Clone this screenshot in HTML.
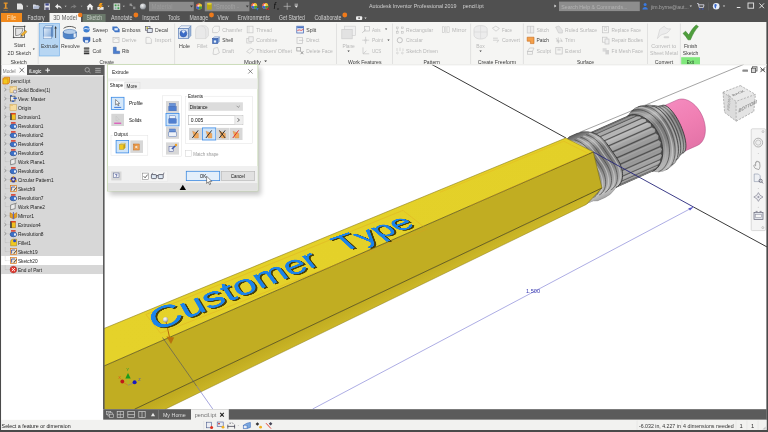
<!DOCTYPE html>
<html><head><meta charset="utf-8"><title>Autodesk Inventor Professional 2019 - pencil.ipt</title>
<style>
html,body{margin:0;padding:0;background:#4d4d4d;overflow:hidden;}
body{width:768px;height:432px;position:relative;font-family:'Liberation Sans', sans-serif;}
svg text{font-family:'Liberation Sans', sans-serif;}
#main{position:absolute;left:0;top:0;will-change:transform;filter:blur(0.35px);}
.ptxt{position:absolute;left:0;top:0;transform-origin:0 0;overflow:visible;pointer-events:none;}
</style></head><body>
<svg id="main" width="768" height="432" viewBox="0 0 768 432">
<defs>
<linearGradient id="gpink" gradientUnits="userSpaceOnUse" x1="672" y1="100" x2="697" y2="150"><stop offset="0" stop-color="#f48aBe"/><stop offset="0.45" stop-color="#f07fb3"/><stop offset="1" stop-color="#e272a6"/></linearGradient>
<linearGradient id="gring" gradientUnits="userSpaceOnUse" x1="588" y1="126" x2="619" y2="196"><stop offset="0" stop-color="#4a4a4a"/><stop offset="0.1" stop-color="#8a8a8a"/><stop offset="0.2" stop-color="#b2b2b2"/><stop offset="0.33" stop-color="#7c7c7c"/><stop offset="0.55" stop-color="#808080"/><stop offset="0.74" stop-color="#a2a2a2"/><stop offset="0.9" stop-color="#b8b8b8"/><stop offset="1" stop-color="#8a8a8a"/></linearGradient>
<linearGradient id="gflu" gradientUnits="userSpaceOnUse" x1="590" y1="130" x2="617" y2="190"><stop offset="0" stop-color="#666"/><stop offset="0.12" stop-color="#a8a8a8"/><stop offset="0.25" stop-color="#bcbcbc"/><stop offset="0.45" stop-color="#9c9c9c"/><stop offset="0.7" stop-color="#969696"/><stop offset="0.88" stop-color="#aaaaaa"/><stop offset="1" stop-color="#7a7a7a"/></linearGradient>
<linearGradient id="gtop" gradientUnits="userSpaceOnUse" x1="104" y1="340" x2="590" y2="140"><stop offset="0" stop-color="#e5d22a"/><stop offset="1" stop-color="#e3d028"/></linearGradient>
<linearGradient id="glow" gradientUnits="userSpaceOnUse" x1="360" y1="300" x2="368" y2="316"><stop offset="0" stop-color="#c0ab20"/><stop offset="1" stop-color="#d0bb2a"/></linearGradient>
<radialGradient id="gsph" cx="0.4" cy="0.35" r="0.7"><stop offset="0" stop-color="#ffffff"/><stop offset="0.6" stop-color="#c8c8c8"/><stop offset="1" stop-color="#808080"/></radialGradient><radialGradient id="gball" cx="0.4" cy="0.35" r="0.7"><stop offset="0" stop-color="#f0f0f0"/><stop offset="0.6" stop-color="#b4b8bc"/><stop offset="1" stop-color="#6e7278"/></radialGradient><linearGradient id="gblu" x1="0" y1="0" x2="1" y2="1"><stop offset="0" stop-color="#e6f0fa"/><stop offset="1" stop-color="#7da6d8"/></linearGradient><filter id="dsh" x="-15%" y="-15%" width="135%" height="135%"><feGaussianBlur stdDeviation="2.6"/></filter>
</defs>
<rect x="0.00" y="0.00" width="768.00" height="432.00" fill="#ffffff" />
<line x1="431.90" y1="64.50" x2="566.00" y2="138.00" stroke="#3a3a3a" stroke-width="1.0" />
<line x1="693.50" y1="207.00" x2="768.00" y2="247.50" stroke="#3a3a3a" stroke-width="1.0" />
<line x1="580.00" y1="132.20" x2="743.70" y2="64.40" stroke="#666" stroke-width="0.6" />
<path d="M662.55,106.44 L677.17,99.94 L679.22,99.27 L681.40,98.99 L683.69,99.12 L686.04,99.66 L688.40,100.58 L690.75,101.89 L693.04,103.55 L695.23,105.54 L697.29,107.83 L699.17,110.37 L700.85,113.12 L702.30,116.03 L703.49,119.06 L704.41,122.15 L705.03,125.25 L705.34,128.30 L705.35,131.26 L705.05,134.08 L704.45,136.69 L703.55,139.07 L702.37,141.17 L700.93,142.96 L699.26,144.39 L697.39,145.46 L682.77,151.96 L682.77,151.96 L683.69,151.31 L684.42,150.29 L684.96,148.91 L685.28,147.19 L685.39,145.16 L685.28,142.86 L684.95,140.32 L684.41,137.60 L683.67,134.73 L682.75,131.77 L681.65,128.76 L680.39,125.76 L679.01,122.82 L677.51,119.99 L675.94,117.31 L674.30,114.84 L672.64,112.62 L670.98,110.67 L669.35,109.05 L667.77,107.77 L666.28,106.86 L664.89,106.32 L663.64,106.18 L662.55,106.44Z" fill="url(#gpink)" stroke="#a8487e" stroke-width="0.5" />
<path d="M542.72,150.80 L566.28,139.79 L569.33,136.79 L576.64,133.54 L582.45,131.84 L587.92,131.82 L591.39,132.25 L627.95,116.01 L629.96,113.14 L632.09,110.55 L635.38,108.11 L639.04,106.48 L643.10,105.77 L646.41,105.84 L649.76,105.99 L654.35,106.47 L657.66,106.53 L662.10,105.43 L662.10,105.43 L663.25,105.17 L664.55,105.31 L666.00,105.87 L667.56,106.82 L669.20,108.16 L670.91,109.86 L672.64,111.88 L674.38,114.21 L676.08,116.79 L677.73,119.58 L679.29,122.54 L680.74,125.61 L682.05,128.74 L683.19,131.88 L684.16,134.98 L684.93,137.97 L685.49,140.82 L685.83,143.46 L685.95,145.87 L685.84,147.98 L685.50,149.78 L684.94,151.22 L684.18,152.29 L683.21,152.96 L683.21,152.96 L679.42,155.52 L677.25,158.02 L674.53,161.74 L672.40,164.33 L670.22,166.83 L666.97,169.37 L663.32,170.99 L659.29,171.79 L655.94,171.64 L652.47,171.21 L615.91,187.45 L613.90,190.32 L610.22,194.36 L605.06,197.52 L597.75,200.77 L593.49,201.03 L569.52,211.12Z" fill="url(#gring)" />
<path d="M578.59,137.93 L627.95,116.01 L630.50,115.16 L633.22,114.79 L636.07,114.92 L638.98,115.54 L641.91,116.64 L644.81,118.20 L647.64,120.19 L650.33,122.59 L652.86,125.34 L655.17,128.41 L657.22,131.74 L658.98,135.27 L660.42,138.95 L661.51,142.70 L662.24,146.47 L662.60,150.19 L662.57,153.80 L662.15,157.23 L661.36,160.43 L660.21,163.35 L658.72,165.92 L656.91,168.11 L654.82,169.89 L652.47,171.21 L603.12,193.14 L605.46,191.81 L607.56,190.04 L609.36,187.84 L610.86,185.27 L612.01,182.36 L612.80,179.16 L613.21,175.72 L613.24,172.11 L612.89,168.39 L612.16,164.62 L611.06,160.87 L609.62,157.20 L607.86,153.66 L605.81,150.34 L603.50,147.27 L600.98,144.51 L598.28,142.12 L595.46,140.12 L592.55,138.56 L589.62,137.46 L586.71,136.84 L583.87,136.71 L581.15,137.08 L578.59,137.93Z" fill="#4c4c4c" />
<polygon points="603.43,192.99 650.96,171.88 654.28,170.17 654.52,169.47 606.99,190.58" fill="url(#gflu)" stroke="#4a4a4a" stroke-width="0.3" stroke-linejoin="round"/>
<line x1="606.13" y1="191.32" x2="653.20" y2="170.41" stroke="#d0d0d0" stroke-width="0.5" opacity="0.45"/>
<polygon points="607.51,190.09 655.04,168.98 657.96,166.62 657.77,165.33 610.25,186.44" fill="url(#gflu)" stroke="#4a4a4a" stroke-width="0.3" stroke-linejoin="round"/>
<line x1="609.61" y1="187.48" x2="656.68" y2="166.57" stroke="#d0d0d0" stroke-width="0.5" opacity="0.45"/>
<polygon points="610.62,185.76 658.14,164.64 660.60,161.75 659.90,159.97 612.38,181.08" fill="url(#gflu)" stroke="#4a4a4a" stroke-width="0.3" stroke-linejoin="round"/>
<line x1="612.01" y1="182.37" x2="659.08" y2="161.46" stroke="#d0d0d0" stroke-width="0.5" opacity="0.45"/>
<polygon points="612.58,180.25 660.10,159.14 662.02,155.84 660.78,153.70 613.25,174.82" fill="url(#gflu)" stroke="#4a4a4a" stroke-width="0.3" stroke-linejoin="round"/>
<line x1="613.17" y1="176.27" x2="660.24" y2="155.36" stroke="#d0d0d0" stroke-width="0.5" opacity="0.45"/>
<polygon points="613.27,173.89 660.80,152.77 662.16,149.22 660.36,146.90 612.83,168.01" fill="url(#gflu)" stroke="#4a4a4a" stroke-width="0.3" stroke-linejoin="round"/>
<line x1="613.04" y1="169.56" x2="660.11" y2="148.65" stroke="#d0d0d0" stroke-width="0.5" opacity="0.45"/>
<polygon points="612.67,167.04 660.20,145.93 661.00,142.28 658.66,139.95 611.13,161.07" fill="url(#gflu)" stroke="#4a4a4a" stroke-width="0.3" stroke-linejoin="round"/>
<line x1="611.62" y1="162.61" x2="658.69" y2="141.70" stroke="#d0d0d0" stroke-width="0.5" opacity="0.45"/>
<polygon points="610.79,160.10 658.32,138.99 658.61,135.43 655.78,133.27 608.25,154.38" fill="url(#gflu)" stroke="#4a4a4a" stroke-width="0.3" stroke-linejoin="round"/>
<line x1="608.99" y1="155.83" x2="656.06" y2="134.92" stroke="#d0d0d0" stroke-width="0.5" opacity="0.45"/>
<polygon points="607.76,153.49 655.29,132.37 655.13,129.07 651.89,127.23 604.36,148.34" fill="url(#gflu)" stroke="#4a4a4a" stroke-width="0.3" stroke-linejoin="round"/>
<line x1="605.31" y1="149.61" x2="652.38" y2="128.70" stroke="#d0d0d0" stroke-width="0.5" opacity="0.45"/>
<polygon points="603.75,147.57 651.28,126.45 650.77,123.56 647.21,122.19 599.69,143.30" fill="url(#gflu)" stroke="#4a4a4a" stroke-width="0.3" stroke-linejoin="round"/>
<line x1="600.78" y1="144.32" x2="647.85" y2="123.41" stroke="#d0d0d0" stroke-width="0.5" opacity="0.45"/>
<polygon points="598.98,142.69 646.51,121.58 645.76,119.23 642.03,118.44 594.50,139.55" fill="url(#gflu)" stroke="#4a4a4a" stroke-width="0.3" stroke-linejoin="round"/>
<line x1="595.68" y1="140.26" x2="642.76" y2="119.35" stroke="#d0d0d0" stroke-width="0.5" opacity="0.45"/>
<polygon points="593.75,139.14 641.28,118.03 640.42,116.32 636.63,116.20 589.10,137.31" fill="url(#gflu)" stroke="#4a4a4a" stroke-width="0.3" stroke-linejoin="round"/>
<line x1="590.30" y1="137.67" x2="637.38" y2="116.77" stroke="#d0d0d0" stroke-width="0.5" opacity="0.45"/>
<polygon points="588.34,137.13 635.87,116.02 635.04,115.01 631.33,115.60 583.80,136.72" fill="url(#gflu)" stroke="#4a4a4a" stroke-width="0.3" stroke-linejoin="round"/>
<line x1="584.96" y1="136.70" x2="632.03" y2="115.80" stroke="#d0d0d0" stroke-width="0.5" opacity="0.45"/>
<polygon points="583.08,136.77 630.61,115.66 629.94,115.37 626.44,116.68 578.91,137.79" fill="url(#gflu)" stroke="#4a4a4a" stroke-width="0.3" stroke-linejoin="round"/>
<line x1="579.95" y1="137.41" x2="627.02" y2="116.50" stroke="#d0d0d0" stroke-width="0.5" opacity="0.45"/>
<path d="M652.55,171.40 L654.91,170.06 L657.02,168.28 L658.84,166.07 L660.35,163.48 L661.50,160.54 L662.30,157.32 L662.71,153.87 L662.74,150.23 L662.39,146.49 L661.65,142.69 L660.55,138.92 L659.10,135.22 L657.33,131.66 L655.27,128.31 L652.94,125.22 L650.40,122.45 L647.69,120.04 L644.84,118.03 L641.92,116.46 L638.97,115.35 L636.04,114.73 L633.18,114.60 L630.44,114.97 L627.87,115.82" fill="none" stroke="#333" stroke-width="0.9" opacity="1" stroke-linecap="round"/>
<path d="M655.32,171.48 L657.78,170.09 L659.97,168.24 L661.86,165.94 L663.43,163.25 L664.63,160.20 L665.45,156.85 L665.89,153.26 L665.92,149.48 L665.55,145.59 L664.79,141.64 L663.64,137.72 L662.14,133.87 L660.29,130.18 L658.15,126.69 L655.73,123.48 L653.09,120.60 L650.27,118.09 L647.31,116.00 L644.27,114.37 L641.20,113.22 L638.16,112.57 L635.19,112.44 L632.34,112.82 L629.67,113.71" fill="none" stroke="#b8b8b8" stroke-width="1.0" opacity="0.6" stroke-linecap="round"/>
<path d="M658.72,171.72 L661.23,170.29 L663.47,168.37 L665.40,165.99 L666.98,163.18 L668.19,160.00 L669.01,156.51 L669.42,152.75 L669.42,148.80 L669.01,144.72 L668.18,140.59 L666.97,136.47 L665.38,132.43 L663.45,128.55 L661.21,124.88 L658.69,121.50 L655.94,118.46 L653.01,115.81 L649.95,113.59 L646.81,111.86 L643.64,110.62 L640.49,109.92 L637.43,109.75 L634.50,110.12 L631.76,111.03" fill="none" stroke="#444" stroke-width="0.8" opacity="0.9" stroke-linecap="round"/>
<path d="M662.32,171.21 L664.76,169.81 L666.91,167.90 L668.75,165.51 L670.25,162.68 L671.36,159.46 L672.09,155.91 L672.41,152.09 L672.33,148.06 L671.83,143.89 L670.93,139.65 L669.65,135.42 L668.01,131.26 L666.03,127.26 L663.74,123.47 L661.20,119.96 L658.44,116.80 L655.51,114.03 L652.46,111.71 L649.33,109.87 L646.20,108.54 L643.10,107.75 L640.09,107.51 L637.22,107.83 L634.55,108.70" fill="none" stroke="#cdcdcd" stroke-width="1.3" opacity="0.7" stroke-linecap="round"/>
<path d="M666.06,169.77 L668.33,168.44 L670.33,166.60 L672.01,164.27 L673.35,161.49 L674.33,158.32 L674.93,154.81 L675.13,151.01 L674.95,147.00 L674.37,142.84 L673.41,138.61 L672.08,134.37 L670.42,130.19 L668.44,126.16 L666.18,122.33 L663.68,118.78 L660.98,115.56 L658.13,112.73 L655.17,110.34 L652.17,108.43 L649.16,107.03 L646.20,106.17 L643.34,105.85 L640.64,106.10 L638.13,106.89" fill="none" stroke="#4a4a4a" stroke-width="0.8" opacity="0.9" stroke-linecap="round"/>
<path d="M669.01,167.80 L671.09,166.56 L672.90,164.82 L674.41,162.59 L675.59,159.93 L676.43,156.87 L676.90,153.47 L677.00,149.78 L676.74,145.88 L676.10,141.82 L675.11,137.68 L673.78,133.53 L672.13,129.43 L670.19,125.46 L668.00,121.69 L665.60,118.18 L663.01,114.99 L660.30,112.17 L657.49,109.78 L654.66,107.85 L651.83,106.42 L649.06,105.51 L646.39,105.13 L643.88,105.31 L641.57,106.02" fill="none" stroke="#c4c4c4" stroke-width="1.1" opacity="0.65" stroke-linecap="round"/>
<path d="M671.64,165.10 L673.49,163.98 L675.08,162.37 L676.39,160.30 L677.39,157.80 L678.07,154.92 L678.41,151.71 L678.42,148.22 L678.08,144.52 L677.40,140.66 L676.41,136.71 L675.10,132.74 L673.51,128.82 L671.67,125.01 L669.60,121.38 L667.34,117.99 L664.92,114.90 L662.40,112.17 L659.81,109.83 L657.20,107.93 L654.61,106.51 L652.09,105.58 L649.67,105.16 L647.41,105.26 L645.34,105.88" fill="none" stroke="#3e3e3e" stroke-width="0.9" opacity="0.9" stroke-linecap="round"/>
<path d="M673.82,162.61 L675.47,161.58 L676.87,160.09 L678.01,158.16 L678.86,155.82 L679.41,153.11 L679.65,150.08 L679.57,146.78 L679.18,143.26 L678.48,139.59 L677.49,135.83 L676.22,132.04 L674.69,128.29 L672.93,124.65 L670.97,121.16 L668.85,117.91 L666.59,114.93 L664.25,112.28 L661.85,110.01 L659.44,108.15 L657.06,106.75 L654.75,105.81 L652.56,105.36 L650.51,105.40 L648.65,105.94" fill="none" stroke="#bababa" stroke-width="1.0" opacity="0.6" stroke-linecap="round"/>
<path d="M675.91,159.93 L677.36,159.01 L678.58,157.64 L679.55,155.86 L680.26,153.68 L680.68,151.16 L680.82,148.32 L680.67,145.22 L680.24,141.92 L679.53,138.46 L678.55,134.91 L677.32,131.32 L675.87,127.77 L674.21,124.31 L672.37,121.00 L670.39,117.89 L668.30,115.04 L666.14,112.50 L663.94,110.32 L661.74,108.52 L659.58,107.14 L657.50,106.21 L655.52,105.73 L653.69,105.72 L652.04,106.18" fill="none" stroke="#444" stroke-width="0.9" opacity="0.9" stroke-linecap="round"/>
<path d="M678.00,157.25 L679.27,156.42 L680.32,155.18 L681.13,153.54 L681.70,151.53 L682.01,149.18 L682.07,146.53 L681.86,143.63 L681.38,140.53 L680.66,137.28 L679.70,133.94 L678.52,130.56 L677.14,127.21 L675.58,123.93 L673.86,120.79 L672.03,117.84 L670.10,115.12 L668.11,112.70 L666.10,110.60 L664.11,108.86 L662.15,107.52 L660.28,106.59 L658.51,106.09 L656.89,106.04 L655.43,106.43" fill="none" stroke="#b4b4b4" stroke-width="1.0" opacity="0.55" stroke-linecap="round"/>
<path d="M680.26,154.93 L681.36,154.19 L682.27,153.05 L682.95,151.52 L683.40,149.63 L683.62,147.42 L683.59,144.92 L683.32,142.18 L682.81,139.24 L682.08,136.15 L681.12,132.97 L679.97,129.75 L678.64,126.54 L677.15,123.40 L675.53,120.38 L673.81,117.54 L672.01,114.93 L670.17,112.58 L668.32,110.54 L666.48,108.85 L664.70,107.52 L663.00,106.59 L661.40,106.08 L659.95,105.98 L658.66,106.31" fill="none" stroke="#4a4a4a" stroke-width="0.8" opacity="0.9" stroke-linecap="round"/>
<path d="M683.21,152.96 L684.18,152.29 L684.94,151.22 L685.50,149.78 L685.84,147.98 L685.95,145.87 L685.83,143.46 L685.49,140.82 L684.93,137.97 L684.16,134.98 L683.19,131.88 L682.05,128.74 L680.74,125.61 L679.29,122.54 L677.73,119.58 L676.08,116.79 L674.38,114.21 L672.64,111.88 L670.91,109.86 L669.20,108.16 L667.56,106.82 L666.00,105.87 L664.55,105.31 L663.25,105.17 L662.10,105.43" fill="none" stroke="#333" stroke-width="0.8" opacity="1" stroke-linecap="round"/>
<clipPath id="cpl"><path d="M542.72,150.80 L566.28,139.79 L569.33,136.79 L576.64,133.54 L582.45,131.84 L587.92,131.82 L591.39,132.25 L593.11,132.86 L594.77,133.55 L596.38,134.35 L597.93,135.25 L599.42,136.26 L600.85,137.35 L602.21,138.52 L603.51,139.76 L604.74,141.06 L605.90,142.43 L607.00,143.83 L608.06,145.27 L609.09,146.74 L610.11,148.22 L611.12,149.71 L612.13,151.19 L613.17,152.66 L614.21,154.13 L615.24,155.60 L616.24,157.08 L617.21,158.59 L618.13,160.12 L618.99,161.69 L619.78,163.30 L620.47,164.95 L621.09,166.64 L621.60,168.36 L622.02,170.11 L622.34,171.89 L622.52,173.68 L622.57,175.48 L622.45,177.28 L622.15,179.06 L621.65,180.80 L620.95,182.46 L620.04,183.99 L618.90,185.36 L617.52,186.53 L615.91,187.45 L613.90,190.32 L610.22,194.36 L605.06,197.52 L597.75,200.77 L593.49,201.03 L569.52,211.12Z"/></clipPath>
<path d="M542.72,150.80 L566.28,139.79 L569.33,136.79 L576.64,133.54 L582.45,131.84 L587.92,131.82 L591.39,132.25 L593.11,132.86 L594.77,133.55 L596.38,134.35 L597.93,135.25 L599.42,136.26 L600.85,137.35 L602.21,138.52 L603.51,139.76 L604.74,141.06 L605.90,142.43 L607.00,143.83 L608.06,145.27 L609.09,146.74 L610.11,148.22 L611.12,149.71 L612.13,151.19 L613.17,152.66 L614.21,154.13 L615.24,155.60 L616.24,157.08 L617.21,158.59 L618.13,160.12 L618.99,161.69 L619.78,163.30 L620.47,164.95 L621.09,166.64 L621.60,168.36 L622.02,170.11 L622.34,171.89 L622.52,173.68 L622.57,175.48 L622.45,177.28 L622.15,179.06 L621.65,180.80 L620.95,182.46 L620.04,183.99 L618.90,185.36 L617.52,186.53 L615.91,187.45 L613.90,190.32 L610.22,194.36 L605.06,197.52 L597.75,200.77 L593.49,201.03 L569.52,211.12Z" fill="url(#gring)" />
<g clip-path="url(#cpl)">
<path d="M589.12,133.31 L590.83,133.88 L592.49,134.57 L594.09,135.37 L595.64,136.27 L597.13,137.27 L598.56,138.36 L599.93,139.53 L601.23,140.77 L602.45,142.08 L603.61,143.44 L604.72,144.85 L605.78,146.29 L606.81,147.76 L607.82,149.24 L608.83,150.72 L609.85,152.21 L610.88,153.68 L611.92,155.15 L612.95,156.62 L613.96,158.10 L614.93,159.60 L615.85,161.13 L616.71,162.70 L617.49,164.31 L618.19,165.96 L618.80,167.65 L619.32,169.38 L619.74,171.13 L620.05,172.91 L620.24,174.70 L620.28,176.50 L620.16,178.29 L619.86,180.07 L619.37,181.81 L618.67,183.47 L617.75,185.01 L616.61,186.38 L615.23,187.55 L613.62,188.46" fill="none" stroke="#cfcfcf" stroke-width="1.1" opacity="0.7"/>
<path d="M586.19,134.61 L587.90,135.18 L589.56,135.86 L591.17,136.66 L592.72,137.57 L594.21,138.57 L595.64,139.66 L597.00,140.83 L598.30,142.07 L599.53,143.38 L600.69,144.74 L601.79,146.15 L602.85,147.59 L603.88,149.05 L604.90,150.54 L605.91,152.02 L606.92,153.51 L607.96,154.98 L609.00,156.44 L610.03,157.92 L611.03,159.40 L612.00,160.90 L612.92,162.43 L613.78,164.00 L614.57,165.61 L615.27,167.26 L615.88,168.95 L616.39,170.67 L616.81,172.43 L617.13,174.20 L617.31,176.00 L617.36,177.80 L617.24,179.59 L616.94,181.37 L616.44,183.11 L615.74,184.77 L614.83,186.31 L613.69,187.68 L612.31,188.85 L610.69,189.76" fill="none" stroke="#454545" stroke-width="0.8" opacity="0.9"/>
<path d="M583.27,135.91 L584.98,136.48 L586.64,137.16 L588.24,137.96 L589.79,138.87 L591.28,139.87 L592.71,140.96 L594.08,142.13 L595.38,143.37 L596.60,144.68 L597.76,146.04 L598.87,147.45 L599.93,148.89 L600.96,150.35 L601.97,151.84 L602.98,153.32 L604.00,154.81 L605.03,156.28 L606.07,157.74 L607.10,159.21 L608.11,160.70 L609.08,162.20 L610.00,163.73 L610.86,165.30 L611.64,166.91 L612.34,168.56 L612.95,170.25 L613.47,171.97 L613.89,173.73 L614.20,175.50 L614.39,177.30 L614.43,179.10 L614.31,180.89 L614.01,182.67 L613.52,184.41 L612.82,186.07 L611.90,187.61 L610.76,188.98 L609.39,190.14 L607.77,191.06" fill="none" stroke="#cfcfcf" stroke-width="1.1" opacity="0.7"/>
<path d="M580.34,137.21 L582.05,137.78 L583.71,138.46 L585.32,139.26 L586.87,140.17 L588.36,141.17 L589.79,142.26 L591.15,143.43 L592.45,144.67 L593.68,145.98 L594.84,147.34 L595.94,148.74 L597.00,150.19 L598.03,151.65 L599.05,153.14 L600.06,154.62 L601.07,156.10 L602.11,157.58 L603.15,159.04 L604.18,160.51 L605.18,162.00 L606.15,163.50 L607.08,165.03 L607.93,166.60 L608.72,168.21 L609.42,169.86 L610.03,171.55 L610.55,173.27 L610.96,175.03 L611.28,176.80 L611.46,178.60 L611.51,180.40 L611.39,182.19 L611.09,183.97 L610.59,185.71 L609.89,187.37 L608.98,188.90 L607.84,190.28 L606.46,191.44 L604.84,192.36" fill="none" stroke="#454545" stroke-width="0.8" opacity="0.9"/>
<path d="M577.42,138.51 L579.13,139.08 L580.79,139.76 L582.39,140.56 L583.94,141.47 L585.43,142.47 L586.86,143.56 L588.23,144.73 L589.53,145.97 L590.75,147.28 L591.91,148.64 L593.02,150.04 L594.08,151.49 L595.11,152.95 L596.12,154.43 L597.13,155.92 L598.15,157.40 L599.18,158.88 L600.22,160.34 L601.25,161.81 L602.26,163.30 L603.23,164.80 L604.15,166.33 L605.01,167.90 L605.79,169.51 L606.49,171.16 L607.10,172.85 L607.62,174.57 L608.04,176.32 L608.35,178.10 L608.54,179.90 L608.58,181.70 L608.46,183.49 L608.16,185.27 L607.67,187.01 L606.97,188.67 L606.05,190.20 L604.91,191.58 L603.54,192.74 L601.92,193.66" fill="none" stroke="#cfcfcf" stroke-width="1.1" opacity="0.7"/>
<path d="M574.49,139.81 L576.20,140.38 L577.86,141.06 L579.47,141.86 L581.02,142.77 L582.51,143.77 L583.94,144.86 L585.30,146.03 L586.60,147.27 L587.83,148.57 L588.99,149.94 L590.09,151.34 L591.15,152.78 L592.18,154.25 L593.20,155.73 L594.21,157.22 L595.22,158.70 L596.26,160.17 L597.30,161.64 L598.33,163.11 L599.33,164.60 L600.30,166.10 L601.23,167.63 L602.08,169.20 L602.87,170.81 L603.57,172.46 L604.18,174.15 L604.70,175.87 L605.11,177.62 L605.43,179.40 L605.61,181.20 L605.66,182.99 L605.54,184.79 L605.24,186.57 L604.74,188.31 L604.04,189.97 L603.13,191.50 L601.99,192.88 L600.61,194.04 L598.99,194.96" fill="none" stroke="#454545" stroke-width="0.8" opacity="0.9"/>
<path d="M571.57,141.11 L573.28,141.67 L574.94,142.36 L576.54,143.16 L578.09,144.06 L579.58,145.07 L581.01,146.16 L582.38,147.33 L583.68,148.57 L584.90,149.87 L586.06,151.24 L587.17,152.64 L588.23,154.08 L589.26,155.55 L590.27,157.03 L591.28,158.52 L592.30,160.00 L593.33,161.47 L594.37,162.94 L595.40,164.41 L596.41,165.89 L597.38,167.40 L598.30,168.93 L599.16,170.50 L599.94,172.11 L600.64,173.76 L601.25,175.45 L601.77,177.17 L602.19,178.92 L602.50,180.70 L602.69,182.49 L602.73,184.29 L602.61,186.09 L602.32,187.87 L601.82,189.61 L601.12,191.27 L600.20,192.80 L599.06,194.17 L597.69,195.34 L596.07,196.26" fill="none" stroke="#cfcfcf" stroke-width="1.1" opacity="0.7"/>
<path d="M568.64,142.41 L570.35,142.97 L572.01,143.66 L573.62,144.46 L575.17,145.36 L576.66,146.37 L578.09,147.45 L579.45,148.62 L580.75,149.87 L581.98,151.17 L583.14,152.53 L584.24,153.94 L585.30,155.38 L586.33,156.85 L587.35,158.33 L588.36,159.82 L589.37,161.30 L590.41,162.77 L591.45,164.24 L592.48,165.71 L593.48,167.19 L594.45,168.70 L595.38,170.23 L596.23,171.80 L597.02,173.41 L597.72,175.06 L598.33,176.75 L598.85,178.47 L599.27,180.22 L599.58,182.00 L599.76,183.79 L599.81,185.59 L599.69,187.39 L599.39,189.17 L598.90,190.91 L598.19,192.56 L597.28,194.10 L596.14,195.47 L594.76,196.64 L593.14,197.56" fill="none" stroke="#454545" stroke-width="0.8" opacity="0.9"/>
<path d="M565.72,143.71 L567.43,144.27 L569.09,144.96 L570.69,145.76 L572.24,146.66 L573.74,147.66 L575.16,148.75 L576.53,149.92 L577.83,151.17 L579.05,152.47 L580.21,153.83 L581.32,155.24 L582.38,156.68 L583.41,158.15 L584.42,159.63 L585.43,161.12 L586.45,162.60 L587.48,164.07 L588.52,165.54 L589.55,167.01 L590.56,168.49 L591.53,170.00 L592.45,171.53 L593.31,173.09 L594.09,174.71 L594.79,176.36 L595.40,178.05 L595.92,179.77 L596.34,181.52 L596.65,183.30 L596.84,185.09 L596.88,186.89 L596.76,188.69 L596.47,190.47 L595.97,192.20 L595.27,193.86 L594.35,195.40 L593.21,196.77 L591.84,197.94 L590.22,198.86" fill="none" stroke="#cfcfcf" stroke-width="1.1" opacity="0.7"/>
<path d="M562.79,145.01 L564.50,145.57 L566.16,146.26 L567.77,147.06 L569.32,147.96 L570.81,148.96 L572.24,150.05 L573.60,151.22 L574.90,152.47 L576.13,153.77 L577.29,155.13 L578.39,156.54 L579.45,157.98 L580.48,159.45 L581.50,160.93 L582.51,162.42 L583.53,163.90 L584.56,165.37 L585.60,166.84 L586.63,168.31 L587.63,169.79 L588.61,171.30 L589.53,172.83 L590.38,174.39 L591.17,176.00 L591.87,177.66 L592.48,179.35 L593.00,181.07 L593.42,182.82 L593.73,184.60 L593.91,186.39 L593.96,188.19 L593.84,189.99 L593.54,191.76 L593.05,193.50 L592.34,195.16 L591.43,196.70 L590.29,198.07 L588.91,199.24 L587.29,200.16" fill="none" stroke="#454545" stroke-width="0.8" opacity="0.9"/>
<path d="M559.87,146.31 L561.58,146.87 L563.24,147.56 L564.84,148.36 L566.39,149.26 L567.89,150.26 L569.31,151.35 L570.68,152.52 L571.98,153.76 L573.21,155.07 L574.37,156.43 L575.47,157.84 L576.53,159.28 L577.56,160.75 L578.57,162.23 L579.58,163.72 L580.60,165.20 L581.63,166.67 L582.67,168.14 L583.70,169.61 L584.71,171.09 L585.68,172.59 L586.60,174.13 L587.46,175.69 L588.24,177.30 L588.94,178.96 L589.55,180.64 L590.07,182.37 L590.49,184.12 L590.80,185.90 L590.99,187.69 L591.03,189.49 L590.92,191.28 L590.62,193.06 L590.12,194.80 L589.42,196.46 L588.50,198.00 L587.36,199.37 L585.99,200.54 L584.37,201.46" fill="none" stroke="#cfcfcf" stroke-width="1.1" opacity="0.7"/>
<path d="M556.94,147.61 L558.65,148.17 L560.31,148.86 L561.92,149.66 L563.47,150.56 L564.96,151.56 L566.39,152.65 L567.75,153.82 L569.05,155.06 L570.28,156.37 L571.44,157.73 L572.54,159.14 L573.60,160.58 L574.64,162.05 L575.65,163.53 L576.66,165.02 L577.68,166.50 L578.71,167.97 L579.75,169.44 L580.78,170.91 L581.78,172.39 L582.76,173.89 L583.68,175.42 L584.54,176.99 L585.32,178.60 L586.02,180.25 L586.63,181.94 L587.15,183.67 L587.57,185.42 L587.88,187.20 L588.06,188.99 L588.11,190.79 L587.99,192.58 L587.69,194.36 L587.20,196.10 L586.49,197.76 L585.58,199.30 L584.44,200.67 L583.06,201.84 L581.44,202.76" fill="none" stroke="#454545" stroke-width="0.8" opacity="0.9"/>
<path d="M554.02,148.91 L555.73,149.47 L557.39,150.16 L559.00,150.96 L560.55,151.86 L562.04,152.86 L563.47,153.95 L564.83,155.12 L566.13,156.36 L567.36,157.67 L568.52,159.03 L569.62,160.44 L570.68,161.88 L571.71,163.35 L572.72,164.83 L573.73,166.32 L574.75,167.80 L575.78,169.27 L576.82,170.74 L577.85,172.21 L578.86,173.69 L579.83,175.19 L580.75,176.72 L581.61,178.29 L582.39,179.90 L583.09,181.55 L583.70,183.24 L584.22,184.97 L584.64,186.72 L584.95,188.50 L585.14,190.29 L585.18,192.09 L585.07,193.88 L584.77,195.66 L584.27,197.40 L583.57,199.06 L582.65,200.60 L581.51,201.97 L580.14,203.14 L578.52,204.06" fill="none" stroke="#cfcfcf" stroke-width="1.1" opacity="0.7"/>
<path d="M551.09,150.20 L552.80,150.77 L554.46,151.46 L556.07,152.25 L557.62,153.16 L559.11,154.16 L560.54,155.25 L561.91,156.42 L563.20,157.66 L564.43,158.97 L565.59,160.33 L566.69,161.74 L567.76,163.18 L568.79,164.65 L569.80,166.13 L570.81,167.61 L571.83,169.10 L572.86,170.57 L573.90,172.04 L574.93,173.51 L575.93,174.99 L576.91,176.49 L577.83,178.02 L578.69,179.59 L579.47,181.20 L580.17,182.85 L580.78,184.54 L581.30,186.26 L581.72,188.02 L582.03,189.80 L582.22,191.59 L582.26,193.39 L582.14,195.18 L581.84,196.96 L581.35,198.70 L580.65,200.36 L579.73,201.90 L578.59,203.27 L577.21,204.44 L575.59,205.35" fill="none" stroke="#454545" stroke-width="0.8" opacity="0.9"/>
<path d="M548.17,151.50 L549.88,152.07 L551.54,152.75 L553.15,153.55 L554.70,154.46 L556.19,155.46 L557.62,156.55 L558.98,157.72 L560.28,158.96 L561.51,160.27 L562.67,161.63 L563.77,163.04 L564.83,164.48 L565.86,165.94 L566.87,167.43 L567.88,168.91 L568.90,170.40 L569.93,171.87 L570.97,173.33 L572.00,174.81 L573.01,176.29 L573.98,177.79 L574.90,179.32 L575.76,180.89 L576.54,182.50 L577.24,184.15 L577.85,185.84 L578.37,187.56 L578.79,189.32 L579.10,191.09 L579.29,192.89 L579.33,194.69 L579.22,196.48 L578.92,198.26 L578.42,200.00 L577.72,201.66 L576.80,203.20 L575.66,204.57 L574.29,205.73 L572.67,206.65" fill="none" stroke="#cfcfcf" stroke-width="1.1" opacity="0.7"/>
<path d="M545.24,152.80 L546.95,153.37 L548.61,154.05 L550.22,154.85 L551.77,155.76 L553.26,156.76 L554.69,157.85 L556.06,159.02 L557.35,160.26 L558.58,161.57 L559.74,162.93 L560.84,164.33 L561.91,165.78 L562.94,167.24 L563.95,168.73 L564.96,170.21 L565.98,171.70 L567.01,173.17 L568.05,174.63 L569.08,176.10 L570.09,177.59 L571.06,179.09 L571.98,180.62 L572.84,182.19 L573.62,183.80 L574.32,185.45 L574.93,187.14 L575.45,188.86 L575.87,190.62 L576.18,192.39 L576.37,194.19 L576.41,195.99 L576.29,197.78 L575.99,199.56 L575.50,201.30 L574.80,202.96 L573.88,204.49 L572.74,205.87 L571.36,207.03 L569.74,207.95" fill="none" stroke="#454545" stroke-width="0.8" opacity="0.9"/>
<path d="M542.32,154.10 L544.03,154.67 L545.69,155.35 L547.30,156.15 L548.85,157.06 L550.34,158.06 L551.77,159.15 L553.13,160.32 L554.43,161.56 L555.66,162.87 L556.82,164.23 L557.92,165.63 L558.98,167.08 L560.01,168.54 L561.02,170.02 L562.03,171.51 L563.05,172.99 L564.09,174.47 L565.12,175.93 L566.15,177.40 L567.16,178.89 L568.13,180.39 L569.05,181.92 L569.91,183.49 L570.69,185.10 L571.39,186.75 L572.00,188.44 L572.52,190.16 L572.94,191.92 L573.25,193.69 L573.44,195.49 L573.48,197.29 L573.37,199.08 L573.07,200.86 L572.57,202.60 L571.87,204.26 L570.95,205.79 L569.81,207.17 L568.44,208.33 L566.82,209.25" fill="none" stroke="#cfcfcf" stroke-width="1.1" opacity="0.7"/>
<path d="M539.39,155.40 L541.10,155.97 L542.76,156.65 L544.37,157.45 L545.92,158.36 L547.41,159.36 L548.84,160.45 L550.21,161.62 L551.50,162.86 L552.73,164.17 L553.89,165.53 L555.00,166.93 L556.06,168.38 L557.09,169.84 L558.10,171.32 L559.11,172.81 L560.13,174.29 L561.16,175.77 L562.20,177.23 L563.23,178.70 L564.24,180.19 L565.21,181.69 L566.13,183.22 L566.99,184.79 L567.77,186.40 L568.47,188.05 L569.08,189.74 L569.60,191.46 L570.02,193.21 L570.33,194.99 L570.52,196.79 L570.56,198.58 L570.44,200.38 L570.14,202.16 L569.65,203.90 L568.95,205.56 L568.03,207.09 L566.89,208.47 L565.51,209.63 L563.89,210.55" fill="none" stroke="#454545" stroke-width="0.8" opacity="0.9"/>
</g>
<path d="M591.40,132.30 L593.11,132.86 L594.77,133.55 L596.38,134.35 L597.93,135.25 L599.42,136.26 L600.85,137.35 L602.21,138.52 L603.51,139.76 L604.74,141.06 L605.90,142.43 L607.00,143.83 L608.06,145.27 L609.09,146.74 L610.11,148.22 L611.12,149.71 L612.13,151.19 L613.17,152.66 L614.21,154.13 L615.24,155.60 L616.24,157.08 L617.21,158.59 L618.13,160.12 L618.99,161.69 L619.78,163.30 L620.47,164.95 L621.09,166.64 L621.60,168.36 L622.02,170.11 L622.34,171.89 L622.52,173.68 L622.57,175.48 L622.45,177.28 L622.15,179.06 L621.65,180.80 L620.95,182.46 L620.04,183.99 L618.90,185.36 L617.52,186.53 L615.90,187.45" fill="none" stroke="#333" stroke-width="0.9" />
<path d="M542.72,150.80 L566.28,139.79 L569.33,136.79 L576.64,133.54 L582.45,131.84 L587.92,131.82 L591.39,132.25 L627.95,116.01 L629.96,113.14 L632.09,110.55 L635.38,108.11 L639.04,106.48 L643.10,105.77 L646.41,105.84 L649.76,105.99 L654.35,106.47 L657.66,106.53 L662.10,105.43" fill="none" stroke="#444" stroke-width="0.5" />
<path d="M593.49,201.03 L597.75,200.77 L605.06,197.52 L610.22,194.36 L613.90,190.32 L615.91,187.45 L652.47,171.21 L655.94,171.64 L659.29,171.79 L663.32,170.99 L666.97,169.37 L670.22,166.83 L672.40,164.33 L674.53,161.74 L677.25,158.02 L679.42,155.52 L683.21,152.96" fill="none" stroke="#777" stroke-width="0.5" opacity="0.7"/>
<polygon points="104.00,366.00 593.25,152.00 602.00,188.00 134.60,409.20 104.00,409.20" fill="#c1ad22" />
<polygon points="134.60,409.20 602.00,188.00 586.40,204.40 165.25,409.20" fill="url(#glow)" />
<polygon points="104.00,328.50 565.75,138.00 593.25,152.00 104.00,366.00" fill="url(#gtop)" />
<line x1="104.00" y1="328.50" x2="565.75" y2="138.00" stroke="#8c7c18" stroke-width="0.6" />
<line x1="104.00" y1="366.00" x2="593.25" y2="152.00" stroke="#4a4210" stroke-width="0.7" />
<line x1="134.60" y1="409.20" x2="602.00" y2="188.00" stroke="#3a340c" stroke-width="0.7" />
<line x1="165.25" y1="409.20" x2="586.40" y2="204.40" stroke="#8c7c18" stroke-width="0.5" />
<line x1="565.75" y1="138.00" x2="593.25" y2="152.00" stroke="#9c8a1a" stroke-width="0.6" />
<line x1="593.25" y1="152.00" x2="602.00" y2="188.00" stroke="#7c6e14" stroke-width="0.6" />
<line x1="602.00" y1="188.00" x2="586.40" y2="204.40" stroke="#7c6e14" stroke-width="0.6" />
<path d="M440,192.3 L563.8,141.2 L588.6,153.6 L470,205.6" fill="none" stroke="#e8a818" stroke-width="0.4" opacity="0.8"/>
<line x1="593.25" y1="152.00" x2="693.50" y2="207.00" stroke="#26267a" stroke-width="0.9" />
<line x1="693.50" y1="207.00" x2="312.70" y2="409.00" stroke="#8a8ad8" stroke-width="0.7" />
<polygon points="693.50,207.00 688.20,208.20 690.00,210.60" fill="#5a5ac8" />
<text x="526.00" y="292.87" font-size="5.2" fill="#3a3ab0" text-anchor="start" font-weight="normal" textLength="14.00" lengthAdjust="spacingAndGlyphs" >1.500</text>
<line x1="162.50" y1="337.50" x2="196.60" y2="386.00" stroke="#4a4e66" stroke-width="0.6" />
<line x1="196.60" y1="386.00" x2="212.75" y2="409.00" stroke="#6a6ac8" stroke-width="0.6" />
<line x1="166.00" y1="321.50" x2="169.80" y2="338.50" stroke="#b8680c" stroke-width="1.0" />
<polygon points="166.40,336.40 174.20,337.40 171.00,344.00" fill="#b8720e" />
<circle cx="165.50" cy="319.60" r="2.60" fill="url(#gsph)" />
<line x1="128.00" y1="385.20" x2="128.00" y2="374.00" stroke="#9ccc2a" stroke-width="0.8" />
<line x1="128.00" y1="385.20" x2="122.50" y2="382.00" stroke="#d86a2a" stroke-width="0.6" />
<line x1="128.00" y1="385.20" x2="134.00" y2="383.00" stroke="#7a7a9a" stroke-width="0.6" />
<polygon points="128.00,373.00 125.30,378.60 130.70,378.60" fill="#1c9a1c" />
<text x="126.30" y="370.88" font-size="4.4" fill="#2aa02a" text-anchor="start" font-weight="normal" >Y</text>
<circle cx="122.30" cy="381.50" r="1.90" fill="#c01818" />
<text x="118.20" y="379.04" font-size="4" fill="#e04a1a" text-anchor="start" font-weight="normal" >X</text>
<circle cx="134.60" cy="382.30" r="2.00" fill="#1818c0" />
<text x="138.30" y="380.94" font-size="4" fill="#3a4ad0" text-anchor="start" font-weight="normal" >Z</text>
<polygon points="145.90,314.50 402.91,210.36 426.77,229.14 160.50,333.20" fill="none" stroke="#e0a020" stroke-width="0.35" />
<rect x="0.00" y="0.00" width="768.00" height="22.00" fill="#505050" />
<polygon points="3.70,2.60 7.70,2.60 7.70,3.70 6.50,3.70 6.50,7.80 7.70,7.80 7.70,8.80 3.70,8.80 3.70,7.80 4.90,7.80 4.90,3.70 3.70,3.70" fill="#e8962a" />
<text x="3.60" y="11.26" font-size="2.4" fill="#d08a2a" text-anchor="start" font-weight="bold" textLength="4.20" lengthAdjust="spacingAndGlyphs" >PRO</text>
<polygon points="17.00,3.60 21.20,3.60 23.00,5.40 23.00,9.60 17.00,9.60" fill="#e6e6e6" />
<path d="M26.2 5.8 h2 l-1 1.2z" fill="#cfcfcf" />
<polygon points="33.00,4.40 35.40,4.40 36.00,5.20 38.60,5.20 38.60,8.80 33.00,8.80" fill="#d8dce6" />
<polygon points="34.00,6.20 40.00,6.20 38.60,8.80 33.00,8.80" fill="#aeb8d0" />
<rect x="44.40" y="3.40" width="5.40" height="6.60" fill="#e8e8f0" />
<rect x="45.40" y="3.40" width="3.40" height="2.20" fill="#3f4a8c" />
<rect x="45.40" y="7.40" width="3.40" height="2.60" fill="#5a5a7a" />
<path d="M55 6.4 l3 -2.6 v1.8 c2.4 0 3.6 1.4 3.6 3.6 c-0.6 -1.4 -1.8 -1.9 -3.6 -1.9 v1.7z" fill="#ececec" />
<path d="M64.6 5.8 h2 l-1 1.2z" fill="#cfcfcf" />
<path d="M76.6 6.4 l-3 -2.2 v1.5 c-2 0 -3 1.1 -3 3 c0.5 -1.1 1.5 -1.6 3 -1.6 v1.4z" fill="#7c7c7c" />
<path d="M80.6 5.8 h2 l-1 1.2z" fill="#9a9a9a" />
<polygon points="86.60,6.80 90.00,3.60 93.40,6.80 92.60,6.80 92.60,9.80 90.80,9.80 90.80,7.60 89.20,7.60 89.20,9.80 87.40,9.80 87.40,6.80" fill="#f2f2f2" />
<polygon points="97.40,7.00 103.60,7.00 103.60,9.80 97.40,9.80" fill="#e8e8e8" />
<polygon points="100.00,3.00 102.60,3.00 101.20,5.40 103.40,5.40 99.00,9.20 100.20,6.40 98.20,6.40" fill="#f09a1a" />
<path d="M107.6 5.8 h2 l-1 1.2z" fill="#cfcfcf" />
<rect x="113.60" y="3.40" width="6.60" height="6.40" fill="#e4e8e4" />
<rect x="114.60" y="4.40" width="2.00" height="2.00" fill="#3a9a4a" />
<rect x="117.40" y="4.40" width="2.00" height="2.00" fill="#6a8a6a" />
<rect x="114.60" y="7.20" width="2.00" height="2.00" fill="#8aa" />
<rect x="117.40" y="7.20" width="2.00" height="2.00" fill="#3a9a4a" />
<path d="M122.8 5.8 h2 l-1 1.2z" fill="#cfcfcf" />
<rect x="129.60" y="3.60" width="2.20" height="2.20" fill="#9a9a9a" />
<rect x="133.00" y="6.60" width="2.40" height="2.40" fill="#8a8a8a" />
<rect x="131.40" y="5.20" width="1.00" height="1.00" fill="#bbb" />
<circle cx="143.00" cy="6.50" r="3.10" fill="url(#gball)" />
<rect x="149.00" y="1.80" width="44.80" height="9.40" fill="#8b8b8b" />
<text x="151.60" y="8.70" font-size="6.4" fill="#999999" text-anchor="start" font-weight="normal" textLength="21.00" lengthAdjust="spacingAndGlyphs" >Material</text>
<path d="M190 5.6 h3 l-1.5 1.9z" fill="#3a3a3a" />
<circle cx="199.00" cy="6.50" r="3.00" fill="#e8d040" />
<path d="M199 6.5 L196 6.5 A3 3 0 0 1 199 3.5Z" fill="#e04040" />
<path d="M199 6.5 L199 3.5 A3 3 0 0 1 202 6.5Z" fill="#f0c030" />
<path d="M199 6.5 L202 6.5 A3 3 0 0 1 199 9.5Z" fill="#40a040" />
<path d="M199 6.5 L199 9.5 A3 3 0 0 1 196 6.5Z" fill="#4060d0" />
<circle cx="198.40" cy="5.70" r="1.10" fill="#ffffff" stroke="none" stroke-width="0" opacity="0.75"/>
<rect x="204.80" y="1.60" width="44.60" height="9.70" fill="#8b8b8b" />
<rect x="207.00" y="3.60" width="4.80" height="6.00" fill="#b8a814" />
<ellipse cx="209.4" cy="3.8" rx="2.4" ry="1" fill="#e2d23a"/>
<text x="213.80" y="8.70" font-size="6.4" fill="#a2a2a2" text-anchor="start" font-weight="normal" textLength="25.00" lengthAdjust="spacingAndGlyphs" >*Smooth -</text>
<path d="M245.8 5.6 h3 l-1.5 1.9z" fill="#3a3a3a" />
<circle cx="254.20" cy="6.00" r="3.00" fill="#e8d040" />
<path d="M254.2 6.0 L251.2 6.0 A3 3 0 0 1 254.2 3.0Z" fill="#e04040" />
<path d="M254.2 6.0 L254.2 3.0 A3 3 0 0 1 257.2 6.0Z" fill="#f0c030" />
<path d="M254.2 6.0 L257.2 6.0 A3 3 0 0 1 254.2 9.0Z" fill="#40a040" />
<path d="M254.2 6.0 L254.2 9.0 A3 3 0 0 1 251.2 6.0Z" fill="#4060d0" />
<circle cx="253.60" cy="5.20" r="1.10" fill="#ffffff" stroke="none" stroke-width="0" opacity="0.75"/>
<polygon points="256.00,8.00 258.60,8.00 257.30,10.40" fill="#2a7ad8" />
<circle cx="265.20" cy="6.00" r="3.00" fill="#e8d040" />
<path d="M265.2 6.0 L262.2 6.0 A3 3 0 0 1 265.2 3.0Z" fill="#e04040" />
<path d="M265.2 6.0 L265.2 3.0 A3 3 0 0 1 268.2 6.0Z" fill="#f0c030" />
<path d="M265.2 6.0 L268.2 6.0 A3 3 0 0 1 265.2 9.0Z" fill="#40a040" />
<path d="M265.2 6.0 L265.2 9.0 A3 3 0 0 1 262.2 6.0Z" fill="#4060d0" />
<circle cx="264.60" cy="5.20" r="1.10" fill="#ffffff" stroke="none" stroke-width="0" opacity="0.75"/>
<line x1="266.40" y1="7.40" x2="269.00" y2="10.00" stroke="#e02020" stroke-width="0.9" />
<line x1="269.00" y1="7.40" x2="266.40" y2="10.00" stroke="#e02020" stroke-width="0.9" />
<text x="273.60" y="9.42" font-size="8.4" fill="#111" text-anchor="start" font-weight="normal" font-style="italic" font-family="'Liberation Serif',serif">f</text>
<text x="277.00" y="10.11" font-size="4.2" fill="#111" text-anchor="start" font-weight="normal" font-style="italic">x</text>
<line x1="283.60" y1="6.30" x2="290.80" y2="6.30" stroke="#bdbdbd" stroke-width="0.7" />
<line x1="287.20" y1="2.80" x2="287.20" y2="9.80" stroke="#bdbdbd" stroke-width="0.7" />
<line x1="294.60" y1="4.20" x2="298.00" y2="4.20" stroke="#e0e0e0" stroke-width="0.7" />
<path d="M294.4 5.6 h3.8 l-1.9 2.2z" fill="#e6e6e6" />
<text x="369.00" y="8.40" font-size="6.1" fill="#cfcfcf" text-anchor="start" font-weight="normal" textLength="87.50" lengthAdjust="spacingAndGlyphs" >Autodesk Inventor Professional 2019</text>
<text x="462.80" y="8.40" font-size="6.1" fill="#d4d4d4" text-anchor="start" font-weight="normal" textLength="21.00" lengthAdjust="spacingAndGlyphs" >pencil.ipt</text>
<path d="M554.4 4.6 l2 1.5 l-2 1.5z" fill="#e8e8e8" />
<rect x="559.00" y="1.60" width="80.80" height="9.50" fill="#8d8d8d" />
<text x="561.30" y="8.53" font-size="6.2" fill="#b4b4b4" text-anchor="start" font-weight="normal" textLength="66.20" lengthAdjust="spacingAndGlyphs" >Search Help &amp; Commands...</text>
<circle cx="645.10" cy="4.60" r="1.50" fill="#3a7ae0" />
<path d="M642.4 9.6 c0 -3.4 5.4 -3.4 5.4 0z" fill="#3a7ae0" />
<text x="651.00" y="8.50" font-size="6.1" fill="#a6a6a6" text-anchor="start" font-weight="normal" textLength="37.80" lengthAdjust="spacingAndGlyphs" >jim.byrne@aut...</text>
<path d="M689.6 5.4 h2.4 l-1.2 1.5z" fill="#d0d0d0" />
<path d="M697 3.6 h1.4 l0.8 3.8 h4.2 l0.6 -2.6 h-5.2" fill="none" stroke="#e4e4f0" stroke-width="0.8" />
<circle cx="699.80" cy="9.00" r="0.70" fill="#3a5ad0" />
<circle cx="702.80" cy="9.00" r="0.70" fill="#3a5ad0" />
<line x1="708.40" y1="2.40" x2="708.40" y2="10.40" stroke="#6a6a6a" stroke-width="0.5" />
<circle cx="716.20" cy="6.30" r="3.30" fill="#e8eef8" />
<path d="M714.8 4 c1.6 -0.4 2.6 0.8 1.6 2 c-0.8 1 0.2 2.2 -0.8 2.6 c-1 -0.6 -1.8 -3.2 -0.8 -4.6z" fill="#3a6ad0" />
<path d="M722.8 5.6 h2.4 l-1.2 1.5z" fill="#d0d0d0" />
<rect x="736.80" y="7.00" width="3.60" height="1.00" fill="#e6e6e6" />
<rect x="748.00" y="3.00" width="5.60" height="5.20" fill="none" stroke="#e6e6e6" stroke-width="0.9" />
<line x1="759.40" y1="3.40" x2="764.00" y2="8.20" stroke="#f0f0f0" stroke-width="0.9" />
<line x1="764.00" y1="3.40" x2="759.40" y2="8.20" stroke="#f0f0f0" stroke-width="0.9" />
<rect x="1.00" y="13.00" width="21.00" height="9.00" fill="#f28a1c" />
<text x="11.60" y="19.67" font-size="6.3" fill="#ffe2b8" text-anchor="middle" font-weight="normal" textLength="9.00" lengthAdjust="spacingAndGlyphs" >File</text>
<text x="27.40" y="19.67" font-size="6.3" fill="#d2d2d2" text-anchor="start" font-weight="normal" textLength="17.20" lengthAdjust="spacingAndGlyphs" >Factory</text>
<rect x="49.50" y="13.00" width="31.50" height="9.20" fill="#f5f5f3" />
<text x="53.20" y="19.67" font-size="6.3" fill="#5a5a5a" text-anchor="start" font-weight="normal" textLength="23.80" lengthAdjust="spacingAndGlyphs" >3D Model</text>
<circle cx="80.20" cy="15.00" r="2.30" fill="#ef7a1a" />
<rect x="82.80" y="14.00" width="22.80" height="8.00" fill="#6a786a" />
<text x="86.50" y="19.87" font-size="6.3" fill="#c4ccc4" text-anchor="start" font-weight="normal" textLength="15.70" lengthAdjust="spacingAndGlyphs" >Sketch</text>
<text x="111.00" y="19.87" font-size="6.3" fill="#d2d2d2" text-anchor="start" font-weight="normal" textLength="21.50" lengthAdjust="spacingAndGlyphs" >Annotate</text>
<circle cx="135.90" cy="15.00" r="2.40" fill="#ef7a1a" />
<text x="142.20" y="19.87" font-size="6.3" fill="#d2d2d2" text-anchor="start" font-weight="normal" textLength="16.80" lengthAdjust="spacingAndGlyphs" >Inspect</text>
<text x="168.00" y="19.87" font-size="6.3" fill="#d2d2d2" text-anchor="start" font-weight="normal" textLength="11.80" lengthAdjust="spacingAndGlyphs" >Tools</text>
<text x="189.40" y="19.87" font-size="6.3" fill="#d2d2d2" text-anchor="start" font-weight="normal" textLength="18.70" lengthAdjust="spacingAndGlyphs" >Manage</text>
<circle cx="211.50" cy="15.00" r="2.40" fill="#ef7a1a" />
<text x="217.50" y="19.87" font-size="6.3" fill="#d2d2d2" text-anchor="start" font-weight="normal" textLength="11.00" lengthAdjust="spacingAndGlyphs" >View</text>
<text x="237.50" y="19.87" font-size="6.3" fill="#d2d2d2" text-anchor="start" font-weight="normal" textLength="32.30" lengthAdjust="spacingAndGlyphs" >Environments</text>
<text x="279.00" y="19.87" font-size="6.3" fill="#d2d2d2" text-anchor="start" font-weight="normal" textLength="25.80" lengthAdjust="spacingAndGlyphs" >Get Started</text>
<text x="314.40" y="19.87" font-size="6.3" fill="#d2d2d2" text-anchor="start" font-weight="normal" textLength="27.10" lengthAdjust="spacingAndGlyphs" >Collaborate</text>
<circle cx="344.80" cy="15.00" r="2.40" fill="#ef7a1a" />
<rect x="356.00" y="16.20" width="6.20" height="3.80" fill="#ececec" rx="1" />
<circle cx="359.10" cy="18.10" r="0.90" fill="#555" />
<path d="M364.4 17.6 h2.2 l-1.1 1.4z" fill="#e0e0e0" />
<rect x="1.00" y="22.00" width="766.00" height="42.40" fill="#f5f5f3" />
<rect x="0.00" y="22.00" width="1.20" height="410.00" fill="#4a4a4a" />
<rect x="766.40" y="22.00" width="1.60" height="410.00" fill="#4a4a4a" />
<line x1="1.00" y1="64.80" x2="767.00" y2="64.80" stroke="#e4e4e0" stroke-width="0.8" />
<line x1="38.20" y1="23.50" x2="38.20" y2="64.00" stroke="#dcdcda" stroke-width="0.8" />
<line x1="174.60" y1="23.50" x2="174.60" y2="64.00" stroke="#dcdcda" stroke-width="0.8" />
<line x1="336.50" y1="23.50" x2="336.50" y2="64.00" stroke="#dcdcda" stroke-width="0.8" />
<line x1="392.50" y1="23.50" x2="392.50" y2="64.00" stroke="#dcdcda" stroke-width="0.8" />
<line x1="470.60" y1="23.50" x2="470.60" y2="64.00" stroke="#dcdcda" stroke-width="0.8" />
<line x1="523.40" y1="23.50" x2="523.40" y2="64.00" stroke="#dcdcda" stroke-width="0.8" />
<line x1="647.50" y1="23.50" x2="647.50" y2="64.00" stroke="#dcdcda" stroke-width="0.8" />
<line x1="680.40" y1="23.50" x2="680.40" y2="64.00" stroke="#dcdcda" stroke-width="0.8" />
<text x="10.40" y="63.50" font-size="6.1" fill="#3a3a3a" text-anchor="start" font-weight="normal" textLength="16.40" lengthAdjust="spacingAndGlyphs" >Sketch</text>
<text x="99.40" y="63.50" font-size="6.1" fill="#3a3a3a" text-anchor="start" font-weight="normal" textLength="14.60" lengthAdjust="spacingAndGlyphs" >Create</text>
<text x="244.00" y="63.50" font-size="6.1" fill="#3a3a3a" text-anchor="start" font-weight="normal" textLength="17.00" lengthAdjust="spacingAndGlyphs" >Modify</text>
<text x="347.90" y="63.50" font-size="6.1" fill="#3a3a3a" text-anchor="start" font-weight="normal" textLength="33.60" lengthAdjust="spacingAndGlyphs" >Work Features</text>
<text x="423.50" y="63.50" font-size="6.1" fill="#3a3a3a" text-anchor="start" font-weight="normal" textLength="16.30" lengthAdjust="spacingAndGlyphs" >Pattern</text>
<text x="477.80" y="63.50" font-size="6.1" fill="#3a3a3a" text-anchor="start" font-weight="normal" textLength="38.20" lengthAdjust="spacingAndGlyphs" >Create Freeform</text>
<text x="576.90" y="63.50" font-size="6.1" fill="#3a3a3a" text-anchor="start" font-weight="normal" textLength="17.10" lengthAdjust="spacingAndGlyphs" >Surface</text>
<text x="654.80" y="63.50" font-size="6.1" fill="#3a3a3a" text-anchor="start" font-weight="normal" textLength="18.30" lengthAdjust="spacingAndGlyphs" >Convert</text>
<path d="M264.2 60.4 h2.8 l-1.4 1.7z" fill="#333" />
<rect x="681.20" y="57.20" width="18.80" height="7.10" fill="#80e87c" />
<text x="686.70" y="63.50" font-size="6.1" fill="#2a4a2a" text-anchor="start" font-weight="normal" textLength="7.30" lengthAdjust="spacingAndGlyphs" >Exit</text>
<rect x="13.60" y="26.40" width="11.00" height="11.00" fill="none" stroke="#555" stroke-width="0.8" />
<path d="M15.6 35.6 v-7.4 h7.2 c0 4.6 -2.6 7.4 -7.2 7.4z" fill="#e4e4e4" stroke="#666" stroke-width="0.7" />
<polygon points="21.00,34.60 25.40,30.20 27.00,31.80 22.60,36.20" fill="#f0b030" stroke="#8a6a20" stroke-width="0.4" />
<polygon points="21.00,34.60 22.60,36.20 20.40,36.80" fill="#444" />
<rect x="12.90" y="25.70" width="1.40" height="1.40" fill="#444" />
<rect x="23.90" y="25.70" width="1.40" height="1.40" fill="#444" />
<rect x="12.90" y="36.70" width="1.40" height="1.40" fill="#444" />
<text x="14.00" y="47.43" font-size="6.2" fill="#3c3c3c" text-anchor="start" font-weight="normal" textLength="11.20" lengthAdjust="spacingAndGlyphs" >Start</text>
<text x="7.60" y="54.83" font-size="6.2" fill="#3c3c3c" text-anchor="start" font-weight="normal" textLength="23.40" lengthAdjust="spacingAndGlyphs" >2D Sketch</text>
<path d="M32.8 48.6 h2 l-1 1.3z" fill="#333" />
<rect x="39.20" y="23.60" width="20.20" height="32.40" fill="#b7d6f3" stroke="#6aaae8" stroke-width="0.6" />
<polygon points="43.60,28.00 45.40,25.60 53.00,25.60 51.40,28.00" fill="#dfeaf6" stroke="#5580b8" stroke-width="0.5" />
<rect x="43.60" y="28.00" width="7.80" height="10.40" fill="url(#gblu)" stroke="#4a78b4" stroke-width="0.6" />
<polygon points="51.40,28.00 53.00,25.60 53.00,36.00 51.40,38.40" fill="#6b93c8" stroke="#4a78b4" stroke-width="0.4" />
<rect x="43.60" y="36.60" width="7.80" height="1.80" fill="#e8eef6" />
<line x1="55.60" y1="27.40" x2="55.60" y2="38.00" stroke="#333" stroke-width="0.7" />
<polygon points="55.60,26.00 54.40,28.40 56.80,28.40" fill="#333" />
<text x="41.00" y="47.63" font-size="6.2" fill="#3c3c3c" text-anchor="start" font-weight="normal" textLength="17.40" lengthAdjust="spacingAndGlyphs" >Extrude</text>
<ellipse cx="69.8" cy="32" rx="6.6" ry="2.6" fill="#b4cdea" stroke="#4a78b4" stroke-width="0.6"/>
<path d="M63.2 32 v4.4 c0 3.4 13.2 3.4 13.2 0 v-4.4 c0 3 -13.2 3 -13.2 0z" fill="#4f84c8" stroke="#3a68a8" stroke-width="0.5" />
<rect x="73.60" y="33.40" width="2.20" height="4.00" fill="#e8eef6" />
<path d="M63.6 28.4 c3 -2.6 9.4 -2.6 12.4 0" fill="none" stroke="#333" stroke-width="0.8" />
<text x="61.00" y="47.63" font-size="6.2" fill="#3c3c3c" text-anchor="start" font-weight="normal" textLength="18.80" lengthAdjust="spacingAndGlyphs" >Revolve</text>
<circle cx="86.50" cy="29.30" r="3.20" fill="#3f7fd0" />
<path d="M83.6 29.6 c2 -2.8 4.6 0.8 6 -1.2" fill="none" stroke="#e8f0ff" stroke-width="1.0" />
<text x="92.50" y="31.53" font-size="6.2" fill="#3c3c3c" text-anchor="start" font-weight="normal" textLength="15.30" lengthAdjust="spacingAndGlyphs" >Sweep</text>
<path d="M83.2 37.2 h6.8 v3 c0 3.6 -6.8 3.6 -6.8 0z" fill="#3b6fc4" stroke="#234a94" stroke-width="0.5" />
<rect x="85.00" y="40.20" width="3.20" height="2.40" fill="#e8f0fa" />
<text x="92.50" y="42.43" font-size="6.2" fill="#3c3c3c" text-anchor="start" font-weight="normal" textLength="9.00" lengthAdjust="spacingAndGlyphs" >Loft</text>
<rect x="83.80" y="47.60" width="5.60" height="1.20" fill="#333" rx="0.5" />
<rect x="83.80" y="49.40" width="5.60" height="1.20" fill="#333" rx="0.5" />
<rect x="83.80" y="51.20" width="5.60" height="1.20" fill="#333" rx="0.5" />
<rect x="83.80" y="53.00" width="5.60" height="1.20" fill="#333" rx="0.5" />
<text x="92.50" y="53.33" font-size="6.2" fill="#3c3c3c" text-anchor="start" font-weight="normal" textLength="9.00" lengthAdjust="spacingAndGlyphs" >Coil</text>
<polygon points="112.40,26.60 117.00,26.60 119.60,29.60 119.60,32.20 115.00,32.20 112.40,29.40" fill="#3f74c6" />
<rect x="114.40" y="28.20" width="3.40" height="2.20" fill="#e8f0fa" />
<text x="121.90" y="31.53" font-size="6.2" fill="#3c3c3c" text-anchor="start" font-weight="normal" textLength="18.70" lengthAdjust="spacingAndGlyphs" >Emboss</text>
<rect x="113.00" y="37.60" width="6.00" height="5.00" fill="none" stroke="#c2c2c2" stroke-width="0.7" />
<path d="M113.6 40 c1.6 -2.2 3.4 -2.2 5 0" fill="none" stroke="#c8c8c8" stroke-width="0.7" />
<text x="121.90" y="42.43" font-size="6.2" fill="#b8b8b8" text-anchor="start" font-weight="normal" textLength="14.60" lengthAdjust="spacingAndGlyphs" >Derive</text>
<path d="M113.4 47.2 v6.4 h6.2 v-2.4 h-3.4 v-4z" fill="#4a7fd0" stroke="#2a54a0" stroke-width="0.5" />
<text x="121.90" y="53.33" font-size="6.2" fill="#3c3c3c" text-anchor="start" font-weight="normal" textLength="7.50" lengthAdjust="spacingAndGlyphs" >Rib</text>
<rect x="145.60" y="26.60" width="4.40" height="3.60" fill="#e8ecf4" stroke="#445" stroke-width="0.6" />
<rect x="147.20" y="28.60" width="5.00" height="3.80" fill="#dfe6f0" stroke="#334" stroke-width="0.6" />
<rect x="146.40" y="27.20" width="1.60" height="1.40" fill="#c8b820" />
<text x="155.00" y="31.53" font-size="6.2" fill="#3c3c3c" text-anchor="start" font-weight="normal" textLength="13.10" lengthAdjust="spacingAndGlyphs" >Decal</text>
<polygon points="146.00,37.40 149.60,37.40 151.40,39.20 151.40,43.40 146.00,43.40" fill="none" stroke="#c4c4c4" stroke-width="0.7" />
<text x="155.00" y="42.43" font-size="6.2" fill="#b8b8b8" text-anchor="start" font-weight="normal" textLength="16.30" lengthAdjust="spacingAndGlyphs" >Import</text>
<polygon points="178.40,28.60 181.00,25.80 191.00,25.80 188.40,28.60" fill="#eef2f8" stroke="#5a7ab0" stroke-width="0.5" />
<rect x="178.40" y="28.60" width="10.00" height="10.00" fill="#d6e2f2" stroke="#4a70ac" stroke-width="0.6" />
<polygon points="188.40,28.60 191.00,25.80 191.00,35.60 188.40,38.60" fill="#9ab4d8" stroke="#4a70ac" stroke-width="0.4" />
<circle cx="183.40" cy="33.60" r="3.40" fill="#3a6cc8" stroke="#2a4c98" stroke-width="0.5" />
<path d="M183.4 33.6 l2.2 -2.4 a3.3 3.3 0 0 0 -4.2 -0.2z" fill="#dce8f8" />
<text x="179.00" y="47.63" font-size="6.2" fill="#3c3c3c" text-anchor="start" font-weight="normal" textLength="11.00" lengthAdjust="spacingAndGlyphs" >Hole</text>
<path d="M195.6 38.6 v-8 c0 -3 2.2 -4.8 5 -4.8 h4.4 c2.4 0.4 3.6 2.4 3.4 5 v5 l-2.6 2.8z" fill="#e9e9e9" stroke="#d0d0d0" stroke-width="0.6" />
<path d="M201.6 25.8 c2.6 0.6 4.2 2.6 4.2 5.4 v7.4" fill="none" stroke="#d4d4d4" stroke-width="0.6" />
<text x="196.90" y="47.63" font-size="6.2" fill="#b8b8b8" text-anchor="start" font-weight="normal" textLength="10.40" lengthAdjust="spacingAndGlyphs" >Fillet</text>
<polygon points="212.60,28.40 214.60,26.20 219.40,26.20 219.40,30.80 217.40,32.60 212.60,32.60" fill="none" stroke="#c6c6c6" stroke-width="0.7" />
<text x="222.30" y="31.53" font-size="6.2" fill="#b8b8b8" text-anchor="start" font-weight="normal" textLength="20.00" lengthAdjust="spacingAndGlyphs" >Chamfer</text>
<polygon points="212.60,38.60 214.40,36.80 219.60,36.80 217.80,38.60" fill="#dbe6f6" stroke="#3a60a8" stroke-width="0.4" />
<rect x="212.60" y="38.60" width="5.20" height="5.00" fill="#3f6fc0" stroke="#2a4c98" stroke-width="0.5" />
<rect x="213.80" y="40.40" width="2.40" height="2.20" fill="#e8f0fa" />
<polygon points="217.80,38.60 219.60,36.80 219.60,41.60 217.80,43.60" fill="#7a9cd0" />
<text x="222.30" y="42.43" font-size="6.2" fill="#3c3c3c" text-anchor="start" font-weight="normal" textLength="10.70" lengthAdjust="spacingAndGlyphs" >Shell</text>
<polygon points="213.00,54.20 213.80,48.40 217.60,47.40 219.40,52.80 216.00,54.60" fill="none" stroke="#c4c4c4" stroke-width="0.7" />
<text x="222.30" y="53.33" font-size="6.2" fill="#b8b8b8" text-anchor="start" font-weight="normal" textLength="11.70" lengthAdjust="spacingAndGlyphs" >Draft</text>
<rect x="247.20" y="26.20" width="5.80" height="6.60" fill="none" stroke="#c8c8c8" stroke-width="0.7" />
<line x1="249.00" y1="26.20" x2="249.00" y2="32.80" stroke="#d0d0d0" stroke-width="0.6" />
<text x="256.30" y="31.53" font-size="6.2" fill="#b8b8b8" text-anchor="start" font-weight="normal" textLength="15.60" lengthAdjust="spacingAndGlyphs" >Thread</text>
<rect x="246.80" y="38.40" width="4.40" height="4.60" fill="none" stroke="#c6c6c6" stroke-width="0.7" />
<rect x="248.80" y="36.80" width="4.40" height="4.60" fill="#efefef" stroke="#c6c6c6" stroke-width="0.7" />
<text x="256.30" y="42.43" font-size="6.2" fill="#b8b8b8" text-anchor="start" font-weight="normal" textLength="21.00" lengthAdjust="spacingAndGlyphs" >Combine</text>
<polygon points="246.60,51.60 250.60,48.20 253.80,49.60 249.80,53.40" fill="none" stroke="#c4c4c4" stroke-width="0.7" />
<text x="256.30" y="53.33" font-size="6.2" fill="#b8b8b8" text-anchor="start" font-weight="normal" textLength="35.60" lengthAdjust="spacingAndGlyphs" >Thicken/ Offset</text>
<rect x="296.80" y="26.20" width="6.80" height="6.80" fill="#e8eef8" stroke="#3a5fb0" stroke-width="0.7" />
<path d="M297.4 31 c2 -3 3.6 1.4 6 -2" fill="none" stroke="#d83030" stroke-width="0.8" />
<rect x="297.20" y="26.60" width="6.00" height="1.60" fill="#4a74c4" />
<text x="306.30" y="31.53" font-size="6.2" fill="#3c3c3c" text-anchor="start" font-weight="normal" textLength="10.00" lengthAdjust="spacingAndGlyphs" >Split</text>
<rect x="297.00" y="37.60" width="5.40" height="5.80" fill="none" stroke="#c4c4c4" stroke-width="0.7" />
<path d="M299 40.4 h4.4" fill="none" stroke="#c4c4c4" stroke-width="0.7" />
<text x="306.30" y="42.43" font-size="6.2" fill="#b8b8b8" text-anchor="start" font-weight="normal" textLength="13.10" lengthAdjust="spacingAndGlyphs" >Direct</text>
<rect x="296.80" y="47.40" width="3.60" height="3.60" fill="none" stroke="#9a9a9a" stroke-width="0.7" />
<line x1="300.60" y1="51.20" x2="303.40" y2="54.20" stroke="#888" stroke-width="0.8" />
<line x1="303.40" y1="51.20" x2="300.60" y2="54.20" stroke="#888" stroke-width="0.8" />
<text x="306.30" y="53.33" font-size="6.2" fill="#b8b8b8" text-anchor="start" font-weight="normal" textLength="26.50" lengthAdjust="spacingAndGlyphs" >Delete Face</text>
<rect x="344.40" y="26.20" width="11.20" height="9.40" fill="#f0f0f0" stroke="#d2d2d2" stroke-width="0.7" />
<rect x="341.80" y="29.40" width="10.40" height="9.40" fill="#e2e2e2" stroke="#cdcdcd" stroke-width="0.7" />
<text x="342.50" y="47.63" font-size="6.2" fill="#b8b8b8" text-anchor="start" font-weight="normal" textLength="12.30" lengthAdjust="spacingAndGlyphs" >Plane</text>
<path d="M347.4 50.4 h2.4 l-1.2 1.5z" fill="#444" />
<rect x="364.40" y="26.40" width="5.00" height="4.60" fill="none" stroke="#c4c4c4" stroke-width="0.7" />
<line x1="362.20" y1="32.80" x2="366.00" y2="29.40" stroke="#c0c0c0" stroke-width="0.8" />
<text x="371.90" y="31.53" font-size="6.2" fill="#b8b8b8" text-anchor="start" font-weight="normal" textLength="8.70" lengthAdjust="spacingAndGlyphs" >Axis</text>
<path d="M385 28.6 h2.2 l-1.1 1.4z" fill="#444" />
<line x1="365.60" y1="36.80" x2="365.60" y2="43.80" stroke="#cacaca" stroke-width="0.7" />
<line x1="362.20" y1="40.20" x2="369.20" y2="40.20" stroke="#cacaca" stroke-width="0.7" />
<circle cx="365.60" cy="40.20" r="1.20" fill="#d0d0d0" />
<text x="371.90" y="42.43" font-size="6.2" fill="#b8b8b8" text-anchor="start" font-weight="normal" textLength="11.20" lengthAdjust="spacingAndGlyphs" >Point</text>
<path d="M387.4 39.6 h2.2 l-1.1 1.4z" fill="#444" />
<path d="M363 47.4 v6.4 h6.2 M363 53.8 l3.4 -3" fill="none" stroke="#c4c4c4" stroke-width="0.7" />
<text x="371.90" y="53.33" font-size="6.2" fill="#b8b8b8" text-anchor="start" font-weight="normal" textLength="9.40" lengthAdjust="spacingAndGlyphs" >UCS</text>
<rect x="396.60" y="27.00" width="1.60" height="1.60" fill="none" stroke="#c0c0c0" stroke-width="0.6" />
<rect x="401.60" y="27.00" width="1.60" height="1.60" fill="none" stroke="#c0c0c0" stroke-width="0.6" />
<rect x="396.60" y="31.60" width="1.60" height="1.60" fill="none" stroke="#c0c0c0" stroke-width="0.6" />
<rect x="401.60" y="31.60" width="1.60" height="1.60" fill="none" stroke="#c0c0c0" stroke-width="0.6" />
<line x1="397.40" y1="28.60" x2="397.40" y2="31.60" stroke="#c8c8c8" stroke-width="0.6" />
<text x="406.00" y="31.53" font-size="6.2" fill="#b8b8b8" text-anchor="start" font-weight="normal" textLength="27.10" lengthAdjust="spacingAndGlyphs" >Rectangular</text>
<circle cx="399.80" cy="40.20" r="2.60" fill="none" stroke="#bcbcbc" stroke-width="0.9" />
<text x="406.00" y="42.43" font-size="6.2" fill="#b8b8b8" text-anchor="start" font-weight="normal" textLength="16.80" lengthAdjust="spacingAndGlyphs" >Circular</text>
<path d="M397 48 v3 M400 47.6 v3.4 M403 48.4 v2.6" fill="none" stroke="#c4c4c4" stroke-width="0.6" />
<circle cx="397.40" cy="53.00" r="0.90" fill="none" stroke="#c0c0c0" stroke-width="0.5" />
<circle cx="402.40" cy="53.00" r="0.90" fill="none" stroke="#c0c0c0" stroke-width="0.5" />
<text x="406.00" y="53.33" font-size="6.2" fill="#b8b8b8" text-anchor="start" font-weight="normal" textLength="31.90" lengthAdjust="spacingAndGlyphs" >Sketch Driven</text>
<rect x="442.40" y="26.80" width="2.20" height="5.60" fill="none" stroke="#c6c6c6" stroke-width="0.6" />
<rect x="447.00" y="26.80" width="2.20" height="5.60" fill="none" stroke="#c6c6c6" stroke-width="0.6" />
<line x1="445.80" y1="26.00" x2="445.80" y2="33.20" stroke="#c6c6c6" stroke-width="0.6" />
<text x="451.90" y="31.53" font-size="6.2" fill="#b8b8b8" text-anchor="start" font-weight="normal" textLength="14.40" lengthAdjust="spacingAndGlyphs" >Mirror</text>
<path d="M474 29.4 c0 -2.6 3 -3.8 6.6 -3.8 c3.6 0 6.6 1.2 6.6 3.8 v5.4 c0 2.6 -3 4.2 -6.6 4.2 c-3.6 0 -6.6 -1.6 -6.6 -4.2z" fill="#ececec" stroke="#d2d2d2" stroke-width="0.7" />
<path d="M474 32 h13.2 M480.6 25.6 v13.4" fill="none" stroke="#d6d6d6" stroke-width="0.6" />
<text x="476.30" y="47.63" font-size="6.2" fill="#b8b8b8" text-anchor="start" font-weight="normal" textLength="8.50" lengthAdjust="spacingAndGlyphs" >Box</text>
<path d="M479.4 50.4 h2.4 l-1.2 1.5z" fill="#444" />
<polygon points="492.40,28.20 495.80,26.20 499.40,28.40 496.00,31.20" fill="none" stroke="#c4c4c4" stroke-width="0.7" />
<text x="501.90" y="31.53" font-size="6.2" fill="#b8b8b8" text-anchor="start" font-weight="normal" textLength="10.00" lengthAdjust="spacingAndGlyphs" >Face</text>
<path d="M493 38.2 h4.8 M493 40.2 h5.6 l-1.6 2.4" fill="none" stroke="#c4c4c4" stroke-width="0.7" />
<text x="501.90" y="42.43" font-size="6.2" fill="#b8b8b8" text-anchor="start" font-weight="normal" textLength="18.10" lengthAdjust="spacingAndGlyphs" >Convert</text>
<rect x="527.20" y="26.20" width="6.60" height="6.80" fill="#ececec" stroke="#c8c8c8" stroke-width="0.7" />
<line x1="530.50" y1="26.20" x2="530.50" y2="33.00" stroke="#c8c8c8" stroke-width="0.6" />
<text x="536.50" y="31.53" font-size="6.2" fill="#b8b8b8" text-anchor="start" font-weight="normal" textLength="12.50" lengthAdjust="spacingAndGlyphs" >Stitch</text>
<path d="M527.2 37.2 h6.8 v6.4 h-3.6 v-2.4 h-3.2z" fill="#f4a04a" stroke="#c86a1a" stroke-width="0.6" />
<text x="536.50" y="42.43" font-size="6.2" fill="#3c3c3c" text-anchor="start" font-weight="normal" textLength="12.50" lengthAdjust="spacingAndGlyphs" >Patch</text>
<polygon points="527.40,51.40 529.60,48.00 534.00,48.00 532.40,51.40" fill="none" stroke="#c4c4c4" stroke-width="0.7" />
<rect x="527.40" y="51.40" width="5.00" height="2.80" fill="none" stroke="#c4c4c4" stroke-width="0.7" />
<text x="536.50" y="53.33" font-size="6.2" fill="#b8b8b8" text-anchor="start" font-weight="normal" textLength="14.50" lengthAdjust="spacingAndGlyphs" >Sculpt</text>
<polygon points="555.60,27.00 559.00,26.00 562.40,30.20 562.40,33.00 558.60,33.00" fill="#e4e4e4" stroke="#c8c8c8" stroke-width="0.6" />
<text x="565.00" y="31.53" font-size="6.2" fill="#b8b8b8" text-anchor="start" font-weight="normal" textLength="32.10" lengthAdjust="spacingAndGlyphs" >Ruled Surface</text>
<path d="M556 38 l3 4.8 M558.2 37.4 v6 M560.6 38.4 l1.6 3.6 M556 41 h6.4" fill="none" stroke="#bcbcbc" stroke-width="0.6" />
<text x="565.00" y="42.43" font-size="6.2" fill="#b8b8b8" text-anchor="start" font-weight="normal" textLength="9.80" lengthAdjust="spacingAndGlyphs" >Trim</text>
<rect x="555.80" y="47.60" width="6.40" height="6.40" fill="none" stroke="#c2c2c2" stroke-width="0.7" />
<rect x="557.40" y="48.60" width="3.20" height="2.00" fill="#d8d8d8" />
<text x="565.00" y="53.33" font-size="6.2" fill="#b8b8b8" text-anchor="start" font-weight="normal" textLength="15.90" lengthAdjust="spacingAndGlyphs" >Extend</text>
<rect x="602.60" y="26.40" width="6.00" height="6.40" fill="none" stroke="#c6c6c6" stroke-width="0.7" />
<rect x="604.20" y="27.80" width="2.60" height="2.60" fill="none" stroke="#c6c6c6" stroke-width="0.6" />
<text x="611.60" y="31.53" font-size="6.2" fill="#b8b8b8" text-anchor="start" font-weight="normal" textLength="29.40" lengthAdjust="spacingAndGlyphs" >Replace Face</text>
<rect x="602.60" y="37.20" width="4.40" height="5.00" fill="none" stroke="#c6c6c6" stroke-width="0.7" />
<rect x="605.00" y="39.00" width="4.00" height="5.00" fill="#efefef" stroke="#c6c6c6" stroke-width="0.7" />
<text x="611.60" y="42.43" font-size="6.2" fill="#b8b8b8" text-anchor="start" font-weight="normal" textLength="31.50" lengthAdjust="spacingAndGlyphs" >Repair Bodies</text>
<rect x="602.60" y="48.20" width="4.00" height="3.40" fill="#dadada" />
<rect x="605.40" y="50.00" width="3.60" height="4.40" fill="#d2d2d2" />
<text x="611.60" y="53.33" font-size="6.2" fill="#b8b8b8" text-anchor="start" font-weight="normal" textLength="31.50" lengthAdjust="spacingAndGlyphs" >Fit Mesh Face</text>
<path d="M657.4 38.6 l2.4 -9.2 l4.4 -3.2 c1.6 2.4 3.6 3 6.4 2.6 c-1.4 2.6 -3.4 4.6 -6.4 5.2 c-3 0.4 -4.6 1.8 -6.8 4.6z" fill="#ececec" stroke="#cfcfcf" stroke-width="0.6" />
<rect x="663.60" y="36.20" width="5.60" height="2.00" fill="#d6d6d6" rx="1" />
<text x="651.30" y="47.63" font-size="6.2" fill="#b8b8b8" text-anchor="start" font-weight="normal" textLength="25.00" lengthAdjust="spacingAndGlyphs" >Convert to</text>
<text x="650.00" y="55.03" font-size="6.2" fill="#b8b8b8" text-anchor="start" font-weight="normal" textLength="27.80" lengthAdjust="spacingAndGlyphs" >Sheet Metal</text>
<path d="M683 33.4 l2.6 -2.2 l3.2 3.8 c2.2 -4.4 4.4 -7.4 7.4 -10 l2.2 1.6 c-3.4 3.6 -5.6 7.6 -8 13.2 h-2.4 c-1.4 -2.6 -3 -4.6 -5 -6.4z" fill="#4f9e3c" stroke="#2f7a24" stroke-width="0.5" />
<text x="684.00" y="47.53" font-size="6.2" fill="#3c3c3c" text-anchor="start" font-weight="normal" textLength="13.30" lengthAdjust="spacingAndGlyphs" >Finish</text>
<text x="682.80" y="55.23" font-size="6.2" fill="#3c3c3c" text-anchor="start" font-weight="normal" textLength="15.50" lengthAdjust="spacingAndGlyphs" >Sketch</text>
<rect x="1.20" y="65.00" width="103.40" height="10.20" fill="#5b5b5b" />
<rect x="1.40" y="65.00" width="25.60" height="10.20" fill="#fdfdfd" />
<text x="2.80" y="72.52" font-size="5.9" fill="#777" text-anchor="start" font-weight="normal" textLength="12.80" lengthAdjust="spacingAndGlyphs" >Model</text>
<line x1="19.60" y1="67.80" x2="24.00" y2="72.40" stroke="#444" stroke-width="0.7" />
<line x1="24.00" y1="67.80" x2="19.60" y2="72.40" stroke="#444" stroke-width="0.7" />
<text x="29.00" y="72.52" font-size="5.9" fill="#e8e8e8" text-anchor="start" font-weight="bold" textLength="12.40" lengthAdjust="spacingAndGlyphs" >iLogic</text>
<line x1="45.40" y1="70.20" x2="50.00" y2="70.20" stroke="#f0f0f0" stroke-width="1" />
<line x1="47.70" y1="67.90" x2="47.70" y2="72.50" stroke="#f0f0f0" stroke-width="1" />
<circle cx="87.20" cy="69.80" r="2.20" fill="none" stroke="#c8c8c8" stroke-width="0.6" />
<line x1="88.80" y1="71.40" x2="90.60" y2="73.00" stroke="#c8c8c8" stroke-width="0.6" />
<line x1="95.20" y1="68.40" x2="100.80" y2="68.40" stroke="#bdbdbd" stroke-width="0.8" />
<line x1="95.20" y1="70.30" x2="100.80" y2="70.30" stroke="#bdbdbd" stroke-width="0.8" />
<line x1="95.20" y1="72.20" x2="100.80" y2="72.20" stroke="#bdbdbd" stroke-width="0.8" />
<rect x="1.20" y="75.20" width="101.80" height="1.00" fill="#ececec" />
<rect x="1.20" y="76.20" width="101.80" height="198.00" fill="#d7d7d7" />
<rect x="103.00" y="75.20" width="1.60" height="334.00" fill="#5b5b5b" />
<rect x="1.20" y="274.20" width="101.80" height="145.80" fill="#ffffff" />
<rect x="1.20" y="256.00" width="101.80" height="9.00" fill="#ffffff" />
<polygon points="2.90,78.80 4.50,77.20 9.50,77.20 9.50,82.40 7.90,84.00 2.90,84.00" fill="#f0c820" stroke="#d86a10" stroke-width="0.7" />
<line x1="2.90" y1="78.80" x2="7.90" y2="78.80" stroke="#d86a10" stroke-width="0.5" />
<line x1="7.90" y1="78.80" x2="7.90" y2="84.00" stroke="#d86a10" stroke-width="0.5" />
<text x="10.80" y="82.72" font-size="5.9" fill="#1c1c1c" text-anchor="start" font-weight="normal" textLength="19.60" lengthAdjust="spacingAndGlyphs" >pencil.ipt</text>
<rect x="10.00" y="86.60" width="6.60" height="6.00" fill="#f6dca0" stroke="#c8a050" stroke-width="0.5" />
<rect x="10.00" y="86.60" width="3.00" height="1.20" fill="#e8c070" />
<circle cx="15.00" cy="91.60" r="1.60" fill="#e8e8f0" stroke="#5a5a8a" stroke-width="0.5" />
<text x="17.90" y="91.72" font-size="5.9" fill="#1c1c1c" text-anchor="start" font-weight="normal" textLength="32.50" lengthAdjust="spacingAndGlyphs" >Solid Bodies(1)</text>
<path d="M4.4 88.1 l1.8 1.5 l-1.8 1.5" fill="none" stroke="#666" stroke-width="0.6" />
<line x1="5.20" y1="85.10" x2="5.20" y2="87.00" stroke="#9a9a9a" stroke-width="0.4" stroke-dasharray="0.6 0.6"/>
<line x1="6.60" y1="89.60" x2="9.60" y2="89.60" stroke="#9a9a9a" stroke-width="0.4" stroke-dasharray="0.6 0.6"/>
<rect x="10.60" y="96.20" width="4.40" height="4.80" fill="#e8e8e8" stroke="#444" stroke-width="0.7" />
<rect x="13.40" y="97.60" width="3.40" height="1.40" fill="#2a5ac0" />
<rect x="10.00" y="95.20" width="2.00" height="1.00" fill="#2a5ac0" />
<rect x="12.00" y="100.60" width="2.00" height="1.20" fill="#2a5ac0" />
<text x="17.90" y="100.72" font-size="5.9" fill="#1c1c1c" text-anchor="start" font-weight="normal" textLength="27.50" lengthAdjust="spacingAndGlyphs" >View: Master</text>
<path d="M4.4 97.1 l1.8 1.5 l-1.8 1.5" fill="none" stroke="#666" stroke-width="0.6" />
<line x1="5.20" y1="94.10" x2="5.20" y2="96.00" stroke="#9a9a9a" stroke-width="0.4" stroke-dasharray="0.6 0.6"/>
<line x1="6.60" y1="98.60" x2="9.60" y2="98.60" stroke="#9a9a9a" stroke-width="0.4" stroke-dasharray="0.6 0.6"/>
<rect x="10.00" y="104.60" width="6.60" height="6.00" fill="#f6dca0" stroke="#c8a050" stroke-width="0.5" />
<rect x="10.00" y="104.60" width="3.00" height="1.20" fill="#e8c070" />
<text x="17.90" y="109.72" font-size="5.9" fill="#1c1c1c" text-anchor="start" font-weight="normal" textLength="13.40" lengthAdjust="spacingAndGlyphs" >Origin</text>
<path d="M4.4 106.1 l1.8 1.5 l-1.8 1.5" fill="none" stroke="#666" stroke-width="0.6" />
<line x1="5.20" y1="103.10" x2="5.20" y2="105.00" stroke="#9a9a9a" stroke-width="0.4" stroke-dasharray="0.6 0.6"/>
<line x1="6.60" y1="107.60" x2="9.60" y2="107.60" stroke="#9a9a9a" stroke-width="0.4" stroke-dasharray="0.6 0.6"/>
<rect x="11.40" y="113.40" width="4.00" height="6.40" fill="#f0c020" stroke="#a06a10" stroke-width="0.5" />
<rect x="10.20" y="113.20" width="1.40" height="6.80" fill="#333" />
<rect x="11.00" y="113.20" width="4.60" height="1.20" fill="#e03020" />
<text x="17.90" y="118.72" font-size="5.9" fill="#1c1c1c" text-anchor="start" font-weight="normal" textLength="22.70" lengthAdjust="spacingAndGlyphs" >Extrusion1</text>
<path d="M4.4 115.1 l1.8 1.5 l-1.8 1.5" fill="none" stroke="#666" stroke-width="0.6" />
<line x1="5.20" y1="112.10" x2="5.20" y2="114.00" stroke="#9a9a9a" stroke-width="0.4" stroke-dasharray="0.6 0.6"/>
<line x1="6.60" y1="116.60" x2="9.60" y2="116.60" stroke="#9a9a9a" stroke-width="0.4" stroke-dasharray="0.6 0.6"/>
<ellipse cx="13.40" cy="126.40" rx="3.3" ry="2.4" fill="#3a70c8" stroke="#1c3c80" stroke-width="0.5"/>
<rect x="11.00" y="122.20" width="4.60" height="1.40" fill="#d83020" />
<rect x="14.00" y="125.40" width="2.00" height="2.20" fill="#e8eef8" />
<text x="17.90" y="127.72" font-size="5.9" fill="#1c1c1c" text-anchor="start" font-weight="normal" textLength="25.70" lengthAdjust="spacingAndGlyphs" >Revolution1</text>
<path d="M4.4 124.1 l1.8 1.5 l-1.8 1.5" fill="none" stroke="#666" stroke-width="0.6" />
<line x1="5.20" y1="121.10" x2="5.20" y2="123.00" stroke="#9a9a9a" stroke-width="0.4" stroke-dasharray="0.6 0.6"/>
<line x1="6.60" y1="125.60" x2="9.60" y2="125.60" stroke="#9a9a9a" stroke-width="0.4" stroke-dasharray="0.6 0.6"/>
<ellipse cx="13.40" cy="135.40" rx="3.3" ry="2.4" fill="#3a70c8" stroke="#1c3c80" stroke-width="0.5"/>
<rect x="11.00" y="131.20" width="4.60" height="1.40" fill="#d83020" />
<rect x="14.00" y="134.40" width="2.00" height="2.20" fill="#e8eef8" />
<text x="17.90" y="136.72" font-size="5.9" fill="#1c1c1c" text-anchor="start" font-weight="normal" textLength="25.70" lengthAdjust="spacingAndGlyphs" >Revolution2</text>
<path d="M4.4 133.1 l1.8 1.5 l-1.8 1.5" fill="none" stroke="#666" stroke-width="0.6" />
<line x1="5.20" y1="130.10" x2="5.20" y2="132.00" stroke="#9a9a9a" stroke-width="0.4" stroke-dasharray="0.6 0.6"/>
<line x1="6.60" y1="134.60" x2="9.60" y2="134.60" stroke="#9a9a9a" stroke-width="0.4" stroke-dasharray="0.6 0.6"/>
<ellipse cx="13.40" cy="144.40" rx="3.3" ry="2.4" fill="#3a70c8" stroke="#1c3c80" stroke-width="0.5"/>
<rect x="11.00" y="140.20" width="4.60" height="1.40" fill="#d83020" />
<rect x="14.00" y="143.40" width="2.00" height="2.20" fill="#e8eef8" />
<text x="17.90" y="145.72" font-size="5.9" fill="#1c1c1c" text-anchor="start" font-weight="normal" textLength="25.70" lengthAdjust="spacingAndGlyphs" >Revolution4</text>
<path d="M4.4 142.1 l1.8 1.5 l-1.8 1.5" fill="none" stroke="#666" stroke-width="0.6" />
<line x1="5.20" y1="139.10" x2="5.20" y2="141.00" stroke="#9a9a9a" stroke-width="0.4" stroke-dasharray="0.6 0.6"/>
<line x1="6.60" y1="143.60" x2="9.60" y2="143.60" stroke="#9a9a9a" stroke-width="0.4" stroke-dasharray="0.6 0.6"/>
<ellipse cx="13.40" cy="153.40" rx="3.3" ry="2.4" fill="#3a70c8" stroke="#1c3c80" stroke-width="0.5"/>
<rect x="11.00" y="149.20" width="4.60" height="1.40" fill="#d83020" />
<rect x="14.00" y="152.40" width="2.00" height="2.20" fill="#e8eef8" />
<text x="17.90" y="154.72" font-size="5.9" fill="#1c1c1c" text-anchor="start" font-weight="normal" textLength="25.70" lengthAdjust="spacingAndGlyphs" >Revolution5</text>
<path d="M4.4 151.1 l1.8 1.5 l-1.8 1.5" fill="none" stroke="#666" stroke-width="0.6" />
<line x1="5.20" y1="148.10" x2="5.20" y2="150.00" stroke="#9a9a9a" stroke-width="0.4" stroke-dasharray="0.6 0.6"/>
<line x1="6.60" y1="152.60" x2="9.60" y2="152.60" stroke="#9a9a9a" stroke-width="0.4" stroke-dasharray="0.6 0.6"/>
<polygon points="10.60,160.00 15.20,158.60 15.20,163.60 10.60,164.80" fill="#ececec" stroke="#555" stroke-width="0.6" />
<line x1="15.20" y1="158.60" x2="16.80" y2="158.00" stroke="#555" stroke-width="0.6" />
<text x="17.90" y="163.72" font-size="5.9" fill="#1c1c1c" text-anchor="start" font-weight="normal" textLength="27.10" lengthAdjust="spacingAndGlyphs" >Work Plane1</text>
<line x1="5.20" y1="157.10" x2="5.20" y2="161.60" stroke="#9a9a9a" stroke-width="0.4" stroke-dasharray="0.6 0.6"/>
<line x1="5.20" y1="161.60" x2="9.60" y2="161.60" stroke="#9a9a9a" stroke-width="0.4" stroke-dasharray="0.6 0.6"/>
<ellipse cx="13.40" cy="171.40" rx="3.3" ry="2.4" fill="#3a70c8" stroke="#1c3c80" stroke-width="0.5"/>
<rect x="11.00" y="167.20" width="4.60" height="1.40" fill="#d83020" />
<rect x="14.00" y="170.40" width="2.00" height="2.20" fill="#e8eef8" />
<text x="17.90" y="172.72" font-size="5.9" fill="#1c1c1c" text-anchor="start" font-weight="normal" textLength="25.70" lengthAdjust="spacingAndGlyphs" >Revolution6</text>
<path d="M4.4 169.1 l1.8 1.5 l-1.8 1.5" fill="none" stroke="#666" stroke-width="0.6" />
<line x1="5.20" y1="166.10" x2="5.20" y2="168.00" stroke="#9a9a9a" stroke-width="0.4" stroke-dasharray="0.6 0.6"/>
<line x1="6.60" y1="170.60" x2="9.60" y2="170.60" stroke="#9a9a9a" stroke-width="0.4" stroke-dasharray="0.6 0.6"/>
<circle cx="13.40" cy="179.60" r="2.90" fill="#3a3a8a" />
<circle cx="13.40" cy="179.60" r="1.20" fill="#d8d8e8" />
<circle cx="13.40" cy="176.80" r="0.90" fill="#e0a020" />
<circle cx="10.80" cy="181.00" r="0.90" fill="#e0a020" />
<circle cx="16.00" cy="181.00" r="0.90" fill="#e0a020" />
<text x="17.90" y="181.72" font-size="5.9" fill="#1c1c1c" text-anchor="start" font-weight="normal" textLength="35.70" lengthAdjust="spacingAndGlyphs" >Circular Pattern1</text>
<path d="M4.4 178.1 l1.8 1.5 l-1.8 1.5" fill="none" stroke="#666" stroke-width="0.6" />
<line x1="5.20" y1="175.10" x2="5.20" y2="177.00" stroke="#9a9a9a" stroke-width="0.4" stroke-dasharray="0.6 0.6"/>
<line x1="6.60" y1="179.60" x2="9.60" y2="179.60" stroke="#9a9a9a" stroke-width="0.4" stroke-dasharray="0.6 0.6"/>
<rect x="10.40" y="185.60" width="6.00" height="6.00" fill="#f4e8d0" stroke="#d87a20" stroke-width="0.7" />
<path d="M11.6 190.6 v-3.6 h3.4" fill="none" stroke="#2a4ab0" stroke-width="0.8" />
<polygon points="13.40,190.40 16.40,187.00 16.90,187.60 14.00,191.00" fill="#333" />
<text x="17.90" y="190.72" font-size="5.9" fill="#1c1c1c" text-anchor="start" font-weight="normal" textLength="17.30" lengthAdjust="spacingAndGlyphs" >Sketch9</text>
<line x1="5.20" y1="184.10" x2="5.20" y2="188.60" stroke="#9a9a9a" stroke-width="0.4" stroke-dasharray="0.6 0.6"/>
<line x1="5.20" y1="188.60" x2="9.60" y2="188.60" stroke="#9a9a9a" stroke-width="0.4" stroke-dasharray="0.6 0.6"/>
<ellipse cx="13.40" cy="198.40" rx="3.3" ry="2.4" fill="#3a70c8" stroke="#1c3c80" stroke-width="0.5"/>
<rect x="11.00" y="194.20" width="4.60" height="1.40" fill="#d83020" />
<rect x="14.00" y="197.40" width="2.00" height="2.20" fill="#e8eef8" />
<text x="17.90" y="199.72" font-size="5.9" fill="#1c1c1c" text-anchor="start" font-weight="normal" textLength="25.70" lengthAdjust="spacingAndGlyphs" >Revolution7</text>
<path d="M4.4 196.1 l1.8 1.5 l-1.8 1.5" fill="none" stroke="#666" stroke-width="0.6" />
<line x1="5.20" y1="193.10" x2="5.20" y2="195.00" stroke="#9a9a9a" stroke-width="0.4" stroke-dasharray="0.6 0.6"/>
<line x1="6.60" y1="197.60" x2="9.60" y2="197.60" stroke="#9a9a9a" stroke-width="0.4" stroke-dasharray="0.6 0.6"/>
<polygon points="10.60,205.00 15.20,203.60 15.20,208.60 10.60,209.80" fill="#ececec" stroke="#555" stroke-width="0.6" />
<line x1="15.20" y1="203.60" x2="16.80" y2="203.00" stroke="#555" stroke-width="0.6" />
<text x="17.90" y="208.72" font-size="5.9" fill="#1c1c1c" text-anchor="start" font-weight="normal" textLength="27.10" lengthAdjust="spacingAndGlyphs" >Work Plane2</text>
<line x1="5.20" y1="202.10" x2="5.20" y2="206.60" stroke="#9a9a9a" stroke-width="0.4" stroke-dasharray="0.6 0.6"/>
<line x1="5.20" y1="206.60" x2="9.60" y2="206.60" stroke="#9a9a9a" stroke-width="0.4" stroke-dasharray="0.6 0.6"/>
<polygon points="10.00,212.60 12.80,214.20 12.80,218.60 10.00,217.20" fill="#e8a020" stroke="#a06010" stroke-width="0.4" />
<polygon points="16.80,212.60 14.00,214.20 14.00,218.60 16.80,217.20" fill="#e8a020" stroke="#a06010" stroke-width="0.4" />
<line x1="13.40" y1="212.00" x2="13.40" y2="219.20" stroke="#2a3ac0" stroke-width="0.7" />
<text x="17.90" y="217.72" font-size="5.9" fill="#1c1c1c" text-anchor="start" font-weight="normal" textLength="16.10" lengthAdjust="spacingAndGlyphs" >Mirror1</text>
<path d="M4.4 214.1 l1.8 1.5 l-1.8 1.5" fill="none" stroke="#666" stroke-width="0.6" />
<line x1="5.20" y1="211.10" x2="5.20" y2="213.00" stroke="#9a9a9a" stroke-width="0.4" stroke-dasharray="0.6 0.6"/>
<line x1="6.60" y1="215.60" x2="9.60" y2="215.60" stroke="#9a9a9a" stroke-width="0.4" stroke-dasharray="0.6 0.6"/>
<rect x="11.40" y="221.40" width="4.00" height="6.40" fill="#f0c020" stroke="#a06a10" stroke-width="0.5" />
<rect x="10.20" y="221.20" width="1.40" height="6.80" fill="#333" />
<rect x="11.00" y="221.20" width="4.60" height="1.20" fill="#e03020" />
<text x="17.90" y="226.72" font-size="5.9" fill="#1c1c1c" text-anchor="start" font-weight="normal" textLength="22.90" lengthAdjust="spacingAndGlyphs" >Extrusion4</text>
<path d="M4.4 223.1 l1.8 1.5 l-1.8 1.5" fill="none" stroke="#666" stroke-width="0.6" />
<line x1="5.20" y1="220.10" x2="5.20" y2="222.00" stroke="#9a9a9a" stroke-width="0.4" stroke-dasharray="0.6 0.6"/>
<line x1="6.60" y1="224.60" x2="9.60" y2="224.60" stroke="#9a9a9a" stroke-width="0.4" stroke-dasharray="0.6 0.6"/>
<ellipse cx="13.40" cy="234.40" rx="3.3" ry="2.4" fill="#3a70c8" stroke="#1c3c80" stroke-width="0.5"/>
<rect x="11.00" y="230.20" width="4.60" height="1.40" fill="#d83020" />
<rect x="14.00" y="233.40" width="2.00" height="2.20" fill="#e8eef8" />
<text x="17.90" y="235.72" font-size="5.9" fill="#1c1c1c" text-anchor="start" font-weight="normal" textLength="25.70" lengthAdjust="spacingAndGlyphs" >Revolution8</text>
<path d="M4.4 232.1 l1.8 1.5 l-1.8 1.5" fill="none" stroke="#666" stroke-width="0.6" />
<line x1="5.20" y1="229.10" x2="5.20" y2="231.00" stroke="#9a9a9a" stroke-width="0.4" stroke-dasharray="0.6 0.6"/>
<line x1="6.60" y1="233.60" x2="9.60" y2="233.60" stroke="#9a9a9a" stroke-width="0.4" stroke-dasharray="0.6 0.6"/>
<path d="M10.6 245.8 v-4 c0 -1.6 1 -2.6 2.6 -2.6 h3.4 v6.6z" fill="#f0c820" stroke="#9a7a10" stroke-width="0.5" />
<circle cx="14.60" cy="240.80" r="1.50" fill="#2a4ac0" />
<text x="17.90" y="244.72" font-size="5.9" fill="#1c1c1c" text-anchor="start" font-weight="normal" textLength="13.10" lengthAdjust="spacingAndGlyphs" >Fillet1</text>
<line x1="5.20" y1="238.10" x2="5.20" y2="242.60" stroke="#9a9a9a" stroke-width="0.4" stroke-dasharray="0.6 0.6"/>
<line x1="5.20" y1="242.60" x2="9.60" y2="242.60" stroke="#9a9a9a" stroke-width="0.4" stroke-dasharray="0.6 0.6"/>
<rect x="10.40" y="248.60" width="6.00" height="6.00" fill="#f4e8d0" stroke="#d87a20" stroke-width="0.7" />
<path d="M11.6 253.6 v-3.6 h3.4" fill="none" stroke="#2a4ab0" stroke-width="0.8" />
<polygon points="13.40,253.40 16.40,250.00 16.90,250.60 14.00,254.00" fill="#333" />
<text x="17.90" y="253.72" font-size="5.9" fill="#1c1c1c" text-anchor="start" font-weight="normal" textLength="19.70" lengthAdjust="spacingAndGlyphs" >Sketch19</text>
<line x1="5.20" y1="247.10" x2="5.20" y2="251.60" stroke="#9a9a9a" stroke-width="0.4" stroke-dasharray="0.6 0.6"/>
<line x1="5.20" y1="251.60" x2="9.60" y2="251.60" stroke="#9a9a9a" stroke-width="0.4" stroke-dasharray="0.6 0.6"/>
<rect x="10.40" y="257.60" width="6.00" height="6.00" fill="#f4e8d0" stroke="#d87a20" stroke-width="0.7" />
<path d="M11.6 262.6 v-3.6 h3.4" fill="none" stroke="#2a4ab0" stroke-width="0.8" />
<polygon points="13.40,262.40 16.40,259.00 16.90,259.60 14.00,263.00" fill="#333" />
<text x="17.90" y="262.72" font-size="5.9" fill="#1c1c1c" text-anchor="start" font-weight="normal" textLength="19.70" lengthAdjust="spacingAndGlyphs" >Sketch20</text>
<line x1="5.20" y1="256.10" x2="5.20" y2="260.60" stroke="#9a9a9a" stroke-width="0.4" stroke-dasharray="0.6 0.6"/>
<line x1="5.20" y1="260.60" x2="9.60" y2="260.60" stroke="#9a9a9a" stroke-width="0.4" stroke-dasharray="0.6 0.6"/>
<circle cx="13.40" cy="269.60" r="3.30" fill="#e03a30" stroke="#a01a14" stroke-width="0.5" />
<line x1="11.80" y1="268.00" x2="15.00" y2="271.20" stroke="#fff" stroke-width="0.9" />
<line x1="15.00" y1="268.00" x2="11.80" y2="271.20" stroke="#fff" stroke-width="0.9" />
<text x="17.90" y="271.72" font-size="5.9" fill="#1c1c1c" text-anchor="start" font-weight="normal" textLength="24.10" lengthAdjust="spacingAndGlyphs" >End of Part</text>
<line x1="5.20" y1="265.10" x2="5.20" y2="269.60" stroke="#9a9a9a" stroke-width="0.4" stroke-dasharray="0.6 0.6"/>
<line x1="5.20" y1="269.60" x2="9.60" y2="269.60" stroke="#9a9a9a" stroke-width="0.4" stroke-dasharray="0.6 0.6"/>
<rect x="103.20" y="409.20" width="663.40" height="10.60" fill="#5b5b5b" />
<rect x="1.20" y="419.80" width="765.40" height="10.20" fill="#f2f2f0" />
<rect x="0.00" y="430.00" width="768.00" height="2.00" fill="#4a4a4a" />
<rect x="106.40" y="411.40" width="4.40" height="3.20" fill="none" stroke="#d0d0d0" stroke-width="0.6" />
<rect x="108.00" y="412.80" width="4.40" height="3.20" fill="#5b5b5b" stroke="#d0d0d0" stroke-width="0.6" />
<rect x="109.40" y="414.20" width="4.20" height="3.20" fill="#5b5b5b" stroke="#d0d0d0" stroke-width="0.6" />
<rect x="117.20" y="411.60" width="6.20" height="6.00" fill="none" stroke="#d0d0d0" stroke-width="0.7" />
<line x1="120.30" y1="411.60" x2="120.30" y2="417.60" stroke="#d0d0d0" stroke-width="0.6" />
<line x1="117.20" y1="414.60" x2="123.40" y2="414.60" stroke="#d0d0d0" stroke-width="0.6" />
<rect x="127.80" y="411.60" width="6.80" height="6.00" fill="none" stroke="#d0d0d0" stroke-width="0.7" />
<line x1="127.80" y1="414.60" x2="134.60" y2="414.60" stroke="#d0d0d0" stroke-width="0.7" />
<rect x="138.80" y="411.60" width="6.40" height="6.00" fill="none" stroke="#d0d0d0" stroke-width="0.7" />
<line x1="142.00" y1="411.60" x2="142.00" y2="417.60" stroke="#d0d0d0" stroke-width="0.7" />
<polygon points="153.00,412.80 151.00,416.20 155.00,416.20" fill="#ececec" />
<line x1="158.50" y1="410.00" x2="158.50" y2="419.40" stroke="#8a8a8a" stroke-width="0.5" />
<text x="162.90" y="416.92" font-size="5.9" fill="#dedede" text-anchor="start" font-weight="normal" textLength="22.90" lengthAdjust="spacingAndGlyphs" >My Home</text>
<rect x="191.00" y="409.20" width="37.80" height="10.80" fill="#f2f2f0" />
<text x="194.80" y="416.92" font-size="5.9" fill="#6e6e6e" text-anchor="start" font-weight="normal" textLength="21.50" lengthAdjust="spacingAndGlyphs" >pencil.ipt</text>
<line x1="220.20" y1="412.80" x2="223.80" y2="416.60" stroke="#222" stroke-width="1.1" />
<line x1="223.80" y1="412.80" x2="220.20" y2="416.60" stroke="#222" stroke-width="1.1" />
<text x="1.60" y="427.92" font-size="5.9" fill="#222" text-anchor="start" font-weight="normal" textLength="69.00" lengthAdjust="spacingAndGlyphs" >Select a feature or dimension</text>
<line x1="203.80" y1="421.00" x2="203.80" y2="429.60" stroke="#d8d8d8" stroke-width="0.5" />
<rect x="206.40" y="422.20" width="5.00" height="5.60" fill="#eceef4" stroke="#4a5a8a" stroke-width="0.6" />
<circle cx="211.60" cy="427.40" r="1.50" fill="#e03020" />
<rect x="217.20" y="422.00" width="6.00" height="4.40" fill="#e8ecf4" stroke="#4a5a9a" stroke-width="0.6" />
<circle cx="223.00" cy="427.20" r="1.40" fill="#f0b020" />
<rect x="218.20" y="423.00" width="1.60" height="1.40" fill="#c03030" />
<line x1="227.60" y1="426.40" x2="234.80" y2="426.40" stroke="#334" stroke-width="0.7" />
<line x1="227.80" y1="424.60" x2="227.80" y2="428.60" stroke="#334" stroke-width="0.7" />
<line x1="234.60" y1="424.60" x2="234.60" y2="428.60" stroke="#334" stroke-width="0.7" />
<line x1="229.40" y1="423.20" x2="231.00" y2="423.20" stroke="#334" stroke-width="0.6" />
<line x1="232.00" y1="422.40" x2="233.40" y2="424.00" stroke="#334" stroke-width="0.5" />
<circle cx="238.20" cy="425.40" r="0.40" fill="#888" />
<polygon points="243.40,425.20 247.00,423.20 250.40,422.40 250.40,427.40 247.00,428.60 243.40,428.60" fill="#7aa8e0" stroke="#2a5ab0" stroke-width="0.5" />
<rect x="243.40" y="425.20" width="3.60" height="3.40" fill="#e4ecf8" stroke="#2a5ab0" stroke-width="0.4" />
<polygon points="257.40,422.20 259.20,424.00 257.40,425.80 255.60,424.00" fill="#333" />
<circle cx="260.60" cy="427.20" r="1.40" fill="#f0b020" />
<line x1="266.00" y1="423.20" x2="271.00" y2="428.60" stroke="#e03020" stroke-width="0.9" />
<polygon points="270.60,422.00 272.40,423.80 270.60,425.60 268.80,423.80" fill="#445" />
<line x1="637.10" y1="420.60" x2="637.10" y2="429.80" stroke="#dcdcdc" stroke-width="0.5" />
<line x1="681.80" y1="420.60" x2="681.80" y2="429.80" stroke="#dcdcdc" stroke-width="0.5" />
<line x1="736.00" y1="420.60" x2="736.00" y2="429.80" stroke="#dcdcdc" stroke-width="0.5" />
<line x1="746.90" y1="420.60" x2="746.90" y2="429.80" stroke="#dcdcdc" stroke-width="0.5" />
<line x1="758.10" y1="420.60" x2="758.10" y2="429.80" stroke="#dcdcdc" stroke-width="0.5" />
<text x="639.00" y="427.92" font-size="5.9" fill="#333" text-anchor="start" font-weight="normal" textLength="41.80" lengthAdjust="spacingAndGlyphs" >-6.032 in, 4.227 in</text>
<text x="683.10" y="427.92" font-size="5.9" fill="#333" text-anchor="start" font-weight="normal" textLength="50.70" lengthAdjust="spacingAndGlyphs" >4 dimensions needed</text>
<text x="739.60" y="427.92" font-size="5.9" fill="#333" text-anchor="start" font-weight="normal" >1</text>
<text x="751.00" y="427.92" font-size="5.9" fill="#333" text-anchor="start" font-weight="normal" >1</text>
<path d="M765.6 426.4 v3.2 h-3.2z" fill="#c8c8c8" />
<polygon points="740.40,85.60 755.40,94.40 736.00,101.40 723.00,92.20" fill="#e9e9e9" />
<polygon points="723.00,92.20 736.00,101.40 736.20,121.20 724.60,112.40" fill="#dcdcdc" />
<polygon points="736.00,101.40 755.40,94.40 753.80,111.40 736.20,121.20" fill="#e4e4e4" />
<line x1="740.40" y1="85.60" x2="755.40" y2="94.40" stroke="#9c9c9c" stroke-width="0.7" stroke-dasharray="2.2 1.2"/>
<line x1="755.40" y1="94.40" x2="736.00" y2="101.40" stroke="#9c9c9c" stroke-width="0.7" stroke-dasharray="2.2 1.2"/>
<line x1="736.00" y1="101.40" x2="723.00" y2="92.20" stroke="#9c9c9c" stroke-width="0.7" stroke-dasharray="2.2 1.2"/>
<line x1="723.00" y1="92.20" x2="740.40" y2="85.60" stroke="#9c9c9c" stroke-width="0.7" stroke-dasharray="2.2 1.2"/>
<line x1="723.00" y1="92.20" x2="724.60" y2="112.40" stroke="#9c9c9c" stroke-width="0.7" stroke-dasharray="2.2 1.2"/>
<line x1="724.60" y1="112.40" x2="736.20" y2="121.20" stroke="#9c9c9c" stroke-width="0.7" stroke-dasharray="2.2 1.2"/>
<line x1="736.20" y1="121.20" x2="736.00" y2="101.40" stroke="#9c9c9c" stroke-width="0.7" stroke-dasharray="2.2 1.2"/>
<line x1="736.20" y1="121.20" x2="753.80" y2="111.40" stroke="#9c9c9c" stroke-width="0.7" stroke-dasharray="2.2 1.2"/>
<line x1="753.80" y1="111.40" x2="755.40" y2="94.40" stroke="#9c9c9c" stroke-width="0.7" stroke-dasharray="2.2 1.2"/>
<text transform="matrix(0.8,-0.34,0.62,0.36,733.4,96.2)" font-size="5.2" fill="#8e8e8e" font-weight="bold">BACK</text>
<text transform="matrix(0.86,-0.42,0.03,1,738.4,112.4)" font-size="5" fill="#8a8a8a" font-weight="bold" font-style="italic">BOTTOM</text>
<text transform="matrix(0.1,-1,0.75,0.55,729.4,111.6)" font-size="4.6" fill="#a6a6a6" font-weight="bold">FRONT</text>
<rect x="742.40" y="69.60" width="5.60" height="2.20" fill="#8a8a8a" rx="0.6" />
<rect x="752.60" y="66.80" width="4.40" height="4.20" fill="#f2f2f0" stroke="#555" stroke-width="0.8" />
<rect x="751.40" y="68.20" width="4.20" height="4.20" fill="#d8d8d8" stroke="#555" stroke-width="0.8" />
<line x1="760.40" y1="67.40" x2="765.00" y2="72.20" stroke="#555" stroke-width="1" />
<line x1="765.00" y1="67.40" x2="760.40" y2="72.20" stroke="#555" stroke-width="1" />
<line x1="760.60" y1="69.80" x2="764.80" y2="69.80" stroke="#555" stroke-width="0.8" />
<rect x="751.20" y="128.80" width="14.40" height="101.80" fill="#f4f4f4" stroke="#c4c4c4" stroke-width="0.6" rx="1.2" />
<circle cx="763.00" cy="131.60" r="1.00" fill="none" stroke="#9a9a9a" stroke-width="0.5" />
<circle cx="758.20" cy="142.60" r="4.40" fill="none" stroke="#a8a8a8" stroke-width="0.9" />
<circle cx="758.20" cy="142.60" r="2.60" fill="#ededed" stroke="#b4b4b4" stroke-width="0.7" />
<circle cx="758.20" cy="153.60" r="0.40" fill="#888" />
<path d="M755.2 168.4 c-1.4 -1.6 -1.8 -3.2 -0.8 -3.6 l1.2 1 v-3.6 h1 v-1 h1 v0.4 h1 v0.6 h1 l0.4 4 c0 1.6 -0.6 2.6 -1.2 3.4z" fill="#f2f2f2" stroke="#777" stroke-width="0.6" />
<polygon points="754.20,174.00 758.40,174.00 760.20,175.80 760.20,181.60 754.20,181.60" fill="#eef0f4" stroke="#8a94a8" stroke-width="0.6" />
<circle cx="760.60" cy="180.80" r="1.60" fill="none" stroke="#556" stroke-width="0.7" />
<line x1="761.80" y1="182.00" x2="763.00" y2="183.40" stroke="#556" stroke-width="0.8" />
<circle cx="758.20" cy="188.60" r="0.40" fill="#888" />
<path d="M758.4 192.6 l1.6 2.6 l3 1.8 l-3 1.8 l-1.6 2.6 l-1.6 -2.6 l-3 -1.8 l3 -1.8z" fill="#e8e8ec" stroke="#778" stroke-width="0.6" />
<circle cx="758.40" cy="197.00" r="1.00" fill="#99a" />
<circle cx="758.20" cy="207.20" r="0.40" fill="#888" />
<rect x="754.00" y="212.60" width="9.00" height="7.00" fill="#dfe3ea" stroke="#667" stroke-width="0.7" />
<rect x="755.40" y="214.60" width="6.20" height="3.00" fill="#f6f6f6" stroke="#889" stroke-width="0.5" />
<line x1="755.60" y1="211.40" x2="757.60" y2="211.40" stroke="#667" stroke-width="0.7" />
<line x1="759.60" y1="211.40" x2="761.60" y2="211.40" stroke="#667" stroke-width="0.7" />
<circle cx="762.80" cy="227.60" r="1.00" fill="none" stroke="#9a9a9a" stroke-width="0.5" />
<rect x="109.50" y="68.00" width="151.50" height="127.00" fill="#000" opacity="0.22" filter="url(#dsh)"/>
<rect x="107.50" y="64.60" width="150.40" height="126.40" fill="#ffffff" stroke="#c4d8ae" stroke-width="0.8" />
<text x="112.00" y="73.80" font-size="6.1" fill="#222" text-anchor="start" font-weight="normal" textLength="16.60" lengthAdjust="spacingAndGlyphs" >Extrude</text>
<line x1="248.20" y1="69.20" x2="252.60" y2="73.60" stroke="#444" stroke-width="0.6" />
<line x1="252.60" y1="69.20" x2="248.20" y2="73.60" stroke="#444" stroke-width="0.6" />
<rect x="107.90" y="78.30" width="149.60" height="10.80" fill="#f0f0f0" />
<rect x="108.40" y="81.40" width="16.20" height="8.00" fill="#ffffff" />
<text x="109.80" y="87.49" font-size="5.8" fill="#111" text-anchor="start" font-weight="normal" textLength="13.20" lengthAdjust="spacingAndGlyphs" >Shape</text>
<rect x="124.80" y="82.20" width="15.20" height="6.80" fill="#f0f0f0" stroke="#dadada" stroke-width="0.5" />
<text x="126.60" y="87.89" font-size="5.8" fill="#111" text-anchor="start" font-weight="normal" textLength="10.60" lengthAdjust="spacingAndGlyphs" >More</text>
<rect x="107.90" y="166.00" width="149.60" height="17.20" fill="#f0f0f0" />
<rect x="107.90" y="183.00" width="149.60" height="7.80" fill="#e1e1e1" />
<polygon points="182.80,184.80 179.60,190.00 186.00,190.00" fill="#000" />
<rect x="111.30" y="97.30" width="12.70" height="12.20" fill="#d5e8fa" stroke="#3a8ae6" stroke-width="0.8" />
<path d="M115.6 99.6 v5.4 l1.4 -1.2 l1 2 l0.9 -0.4 l-1 -2 h1.8z" fill="#fff" stroke="#333" stroke-width="0.5" />
<line x1="114.20" y1="107.40" x2="121.20" y2="107.40" stroke="#2a6ad8" stroke-width="0.9" />
<text x="129.00" y="105.49" font-size="5.8" fill="#111" text-anchor="start" font-weight="normal" textLength="13.80" lengthAdjust="spacingAndGlyphs" >Profile</text>
<rect x="111.30" y="113.80" width="12.70" height="12.20" fill="#d6d6d6" />
<path d="M116 116 v5 l1.2 -1 l0.9 1.8 M116 116 l3.4 3.8 h-1.4" fill="none" stroke="#c2c2c2" stroke-width="0.5" />
<line x1="114.20" y1="123.20" x2="121.20" y2="123.20" stroke="#e020b0" stroke-width="0.9" />
<text x="129.00" y="122.09" font-size="5.8" fill="#111" text-anchor="start" font-weight="normal" textLength="12.60" lengthAdjust="spacingAndGlyphs" >Solids</text>
<rect x="111.00" y="135.40" width="36.80" height="19.80" fill="none" stroke="#e2e2e2" stroke-width="0.5" />
<rect x="112.80" y="131.60" width="15.60" height="5.00" fill="#ffffff" />
<text x="113.80" y="136.09" font-size="5.8" fill="#111" text-anchor="start" font-weight="normal" textLength="14.00" lengthAdjust="spacingAndGlyphs" >Output</text>
<rect x="116.10" y="140.40" width="12.60" height="12.50" fill="#cfe4f8" stroke="#3a8ae6" stroke-width="0.8" />
<polygon points="119.40,144.80 121.00,143.20 125.40,143.20 123.80,144.80" fill="#f8e890" stroke="#a88a10" stroke-width="0.3" />
<rect x="119.40" y="144.80" width="4.40" height="4.60" fill="#f0c820" stroke="#a88a10" stroke-width="0.4" />
<polygon points="123.80,144.80 125.40,143.20 125.40,147.80 123.80,149.40" fill="#c8a010" />
<rect x="130.30" y="140.40" width="12.70" height="12.50" fill="#d8d8d8" />
<rect x="133.60" y="144.00" width="5.60" height="6.00" fill="#f2a050" stroke="#c06a18" stroke-width="0.5" />
<rect x="135.00" y="145.60" width="2.80" height="2.80" fill="#fbe0c0" stroke="#c06a18" stroke-width="0.3" />
<line x1="133.60" y1="144.00" x2="135.00" y2="145.60" stroke="#c06a18" stroke-width="0.3" />
<rect x="162.50" y="95.80" width="19.10" height="60.40" fill="none" stroke="#e2e2e2" stroke-width="0.5" />
<rect x="166.00" y="101.00" width="13.00" height="12.20" fill="#d8d8d8" />
<rect x="166.00" y="113.40" width="13.00" height="12.50" fill="#cfe4f8" stroke="#3a8ae6" stroke-width="0.8" />
<rect x="166.00" y="126.60" width="13.00" height="12.20" fill="#d8d8d8" />
<rect x="166.00" y="142.40" width="13.00" height="12.20" fill="#d8d8d8" />
<rect x="169.60" y="103.40" width="5.80" height="3.00" fill="#6a94d8" stroke="#3a60b0" stroke-width="0.4" />
<rect x="168.80" y="106.40" width="7.40" height="4.40" fill="#4f7fd0" stroke="#3a60b0" stroke-width="0.4" />
<rect x="169.60" y="115.80" width="5.80" height="3.00" fill="#e8f0fa" stroke="#3a60b0" stroke-width="0.4" />
<rect x="168.80" y="118.80" width="7.40" height="4.40" fill="#4f7fd0" stroke="#3a60b0" stroke-width="0.4" />
<rect x="169.60" y="129.00" width="5.80" height="3.00" fill="#6a94d8" stroke="#3a60b0" stroke-width="0.4" />
<rect x="168.80" y="132.00" width="7.40" height="4.40" fill="#eef2f8" stroke="#3a60b0" stroke-width="0.4" />
<rect x="169.00" y="146.40" width="4.40" height="5.00" fill="#e8ecf6" stroke="#4a5a9a" stroke-width="0.5" />
<polygon points="171.40,148.60 175.20,145.00 176.20,146.00 172.40,149.60" fill="#3a5ab0" />
<circle cx="176.00" cy="145.00" r="1.20" fill="#f0a020" />
<rect x="185.40" y="96.20" width="66.90" height="47.40" fill="none" stroke="#e2e2e2" stroke-width="0.5" />
<rect x="187.20" y="93.40" width="16.60" height="5.00" fill="#ffffff" />
<text x="188.00" y="98.49" font-size="5.8" fill="#111" text-anchor="start" font-weight="normal" textLength="15.00" lengthAdjust="spacingAndGlyphs" >Extents</text>
<rect x="188.50" y="102.30" width="54.40" height="8.50" fill="#dcdcdc" />
<text x="189.80" y="108.69" font-size="5.8" fill="#111" text-anchor="start" font-weight="normal" textLength="17.80" lengthAdjust="spacingAndGlyphs" >Distance</text>
<path d="M236.6 105.8 l1.6 1.6 l1.6 -1.6" fill="none" stroke="#555" stroke-width="0.5" />
<rect x="188.50" y="115.30" width="54.40" height="9.40" fill="#ffffff" stroke="#b8b8b8" stroke-width="0.6" />
<rect x="234.80" y="115.70" width="7.80" height="8.60" fill="#eeeeee" />
<line x1="234.80" y1="115.60" x2="234.80" y2="124.40" stroke="#c8c8c8" stroke-width="0.5" />
<text x="190.80" y="121.69" font-size="5.8" fill="#111" text-anchor="start" font-weight="normal" textLength="12.40" lengthAdjust="spacingAndGlyphs" >0.005</text>
<path d="M237.6 118.2 l1.8 1.8 l-1.8 1.8" fill="none" stroke="#222" stroke-width="0.7" />
<rect x="189.10" y="127.90" width="12.90" height="12.10" fill="#d8d8d8" />
<polygon points="192.55,131.20 198.35,133.40 198.35,138.00 194.55,138.00" fill="#f2a85a" stroke="#c87a2a" stroke-width="0.3" />
<line x1="192.35" y1="138.00" x2="198.15" y2="130.40" stroke="#222" stroke-width="0.9" />
<rect x="202.40" y="127.90" width="13.40" height="12.10" fill="#cfe4f8" stroke="#3a8ae6" stroke-width="0.8" />
<polygon points="206.10,131.20 211.90,133.40 211.90,138.00 208.10,138.00" fill="#f2a85a" stroke="#c87a2a" stroke-width="0.3" />
<line x1="205.90" y1="138.00" x2="211.70" y2="130.40" stroke="#222" stroke-width="0.9" />
<rect x="216.10" y="127.90" width="12.90" height="12.10" fill="#d8d8d8" />
<polygon points="219.55,131.20 225.35,133.40 225.35,138.00 221.55,138.00" fill="#f2a85a" stroke="#c87a2a" stroke-width="0.3" />
<line x1="219.35" y1="138.00" x2="225.15" y2="130.40" stroke="#222" stroke-width="0.9" />
<line x1="219.35" y1="130.40" x2="225.15" y2="138.00" stroke="#222" stroke-width="0.9" />
<rect x="229.50" y="127.90" width="13.00" height="12.10" fill="#d8d8d8" />
<polygon points="233.00,131.20 238.80,133.40 238.80,138.00 235.00,138.00" fill="#f2a85a" stroke="#c87a2a" stroke-width="0.3" />
<line x1="232.80" y1="138.00" x2="238.60" y2="130.40" stroke="#e02020" stroke-width="0.9" />
<rect x="185.60" y="150.30" width="6.00" height="6.00" fill="#ffffff" stroke="#d0d0d0" stroke-width="0.5" />
<text x="193.20" y="155.69" font-size="5.8" fill="#9a9a9a" text-anchor="start" font-weight="normal" textLength="25.40" lengthAdjust="spacingAndGlyphs" >Match shape</text>
<rect x="111.30" y="171.50" width="10.20" height="8.90" fill="#d8d8d8" />
<rect x="113.40" y="173.00" width="5.60" height="4.60" fill="#f4f4f8" stroke="#4a5a8a" stroke-width="0.5" />
<text x="116.20" y="176.71" font-size="4.2" fill="#2a3a8a" text-anchor="middle" font-weight="bold" >?</text>
<rect x="140.60" y="171.00" width="27.20" height="10.20" fill="#f5f5f5" stroke="#e6e6e6" stroke-width="0.5" />
<rect x="142.40" y="173.10" width="6.30" height="6.30" fill="#fff" stroke="#777" stroke-width="0.5" />
<path d="M143.6 176.2 l1.5 1.6 l2.5 -3.2" fill="none" stroke="#222" stroke-width="0.7" />
<rect x="151.40" y="174.60" width="5.00" height="4.00" fill="#dfe9f4" stroke="#334" stroke-width="0.7" rx="0.8" />
<rect x="158.20" y="174.60" width="5.00" height="4.00" fill="#dfe9f4" stroke="#334" stroke-width="0.7" rx="0.8" />
<line x1="156.40" y1="175.60" x2="158.20" y2="175.60" stroke="#334" stroke-width="0.7" />
<path d="M151.4 175 l1.4 -2.2 M163.2 175 l0.8 -2.4" fill="none" stroke="#334" stroke-width="0.6" />
<rect x="186.30" y="171.30" width="33.40" height="9.30" fill="#e3effb" stroke="#3f8ae0" stroke-width="0.8" />
<text x="199.80" y="177.99" font-size="5.8" fill="#111" text-anchor="start" font-weight="normal" textLength="6.60" lengthAdjust="spacingAndGlyphs" >OK</text>
<rect x="221.30" y="171.30" width="33.40" height="9.30" fill="#e1e1e1" stroke="#b4b4b4" stroke-width="0.6" />
<text x="230.80" y="177.99" font-size="5.8" fill="#111" text-anchor="start" font-weight="normal" textLength="14.00" lengthAdjust="spacingAndGlyphs" >Cancel</text>
<path d="M206.6 176.2 v7.2 l1.7 -1.5 l1.2 2.7 l1.2 -0.5 l-1.2 -2.7 h2.3z" fill="#ffffff" stroke="#222" stroke-width="0.5" />
</svg>
<svg class="ptxt" width="470" height="150" style="transform:matrix3d(0.45866804,-0.07277998,0,0.0002860622,0.07061377,0.13299337,0,-0.0004079999,0,0,1,0,140.025993,302.233786,0,1)">
<text x="0" y="110" font-size="100" fill="#1b83ea" stroke="#1b83ea" stroke-width="0.9" style="font-kerning:none;filter:drop-shadow(3px 5px 0px #4a4008)">Customer</text>
</svg><svg class="ptxt" width="260" height="150" style="transform:matrix3d(0.42171005,-0.06017428,0,0.0002418792,0.09095135,0.10565243,0,-0.0003197224,0,0,1,0,320.230333,231.726953,0,1)">
<text x="0" y="110" font-size="100" fill="#1b83ea" stroke="#1b83ea" stroke-width="0.9" style="font-kerning:none;filter:drop-shadow(3px 5px 0px #4a4008)">Type</text>
</svg>
</body></html>
